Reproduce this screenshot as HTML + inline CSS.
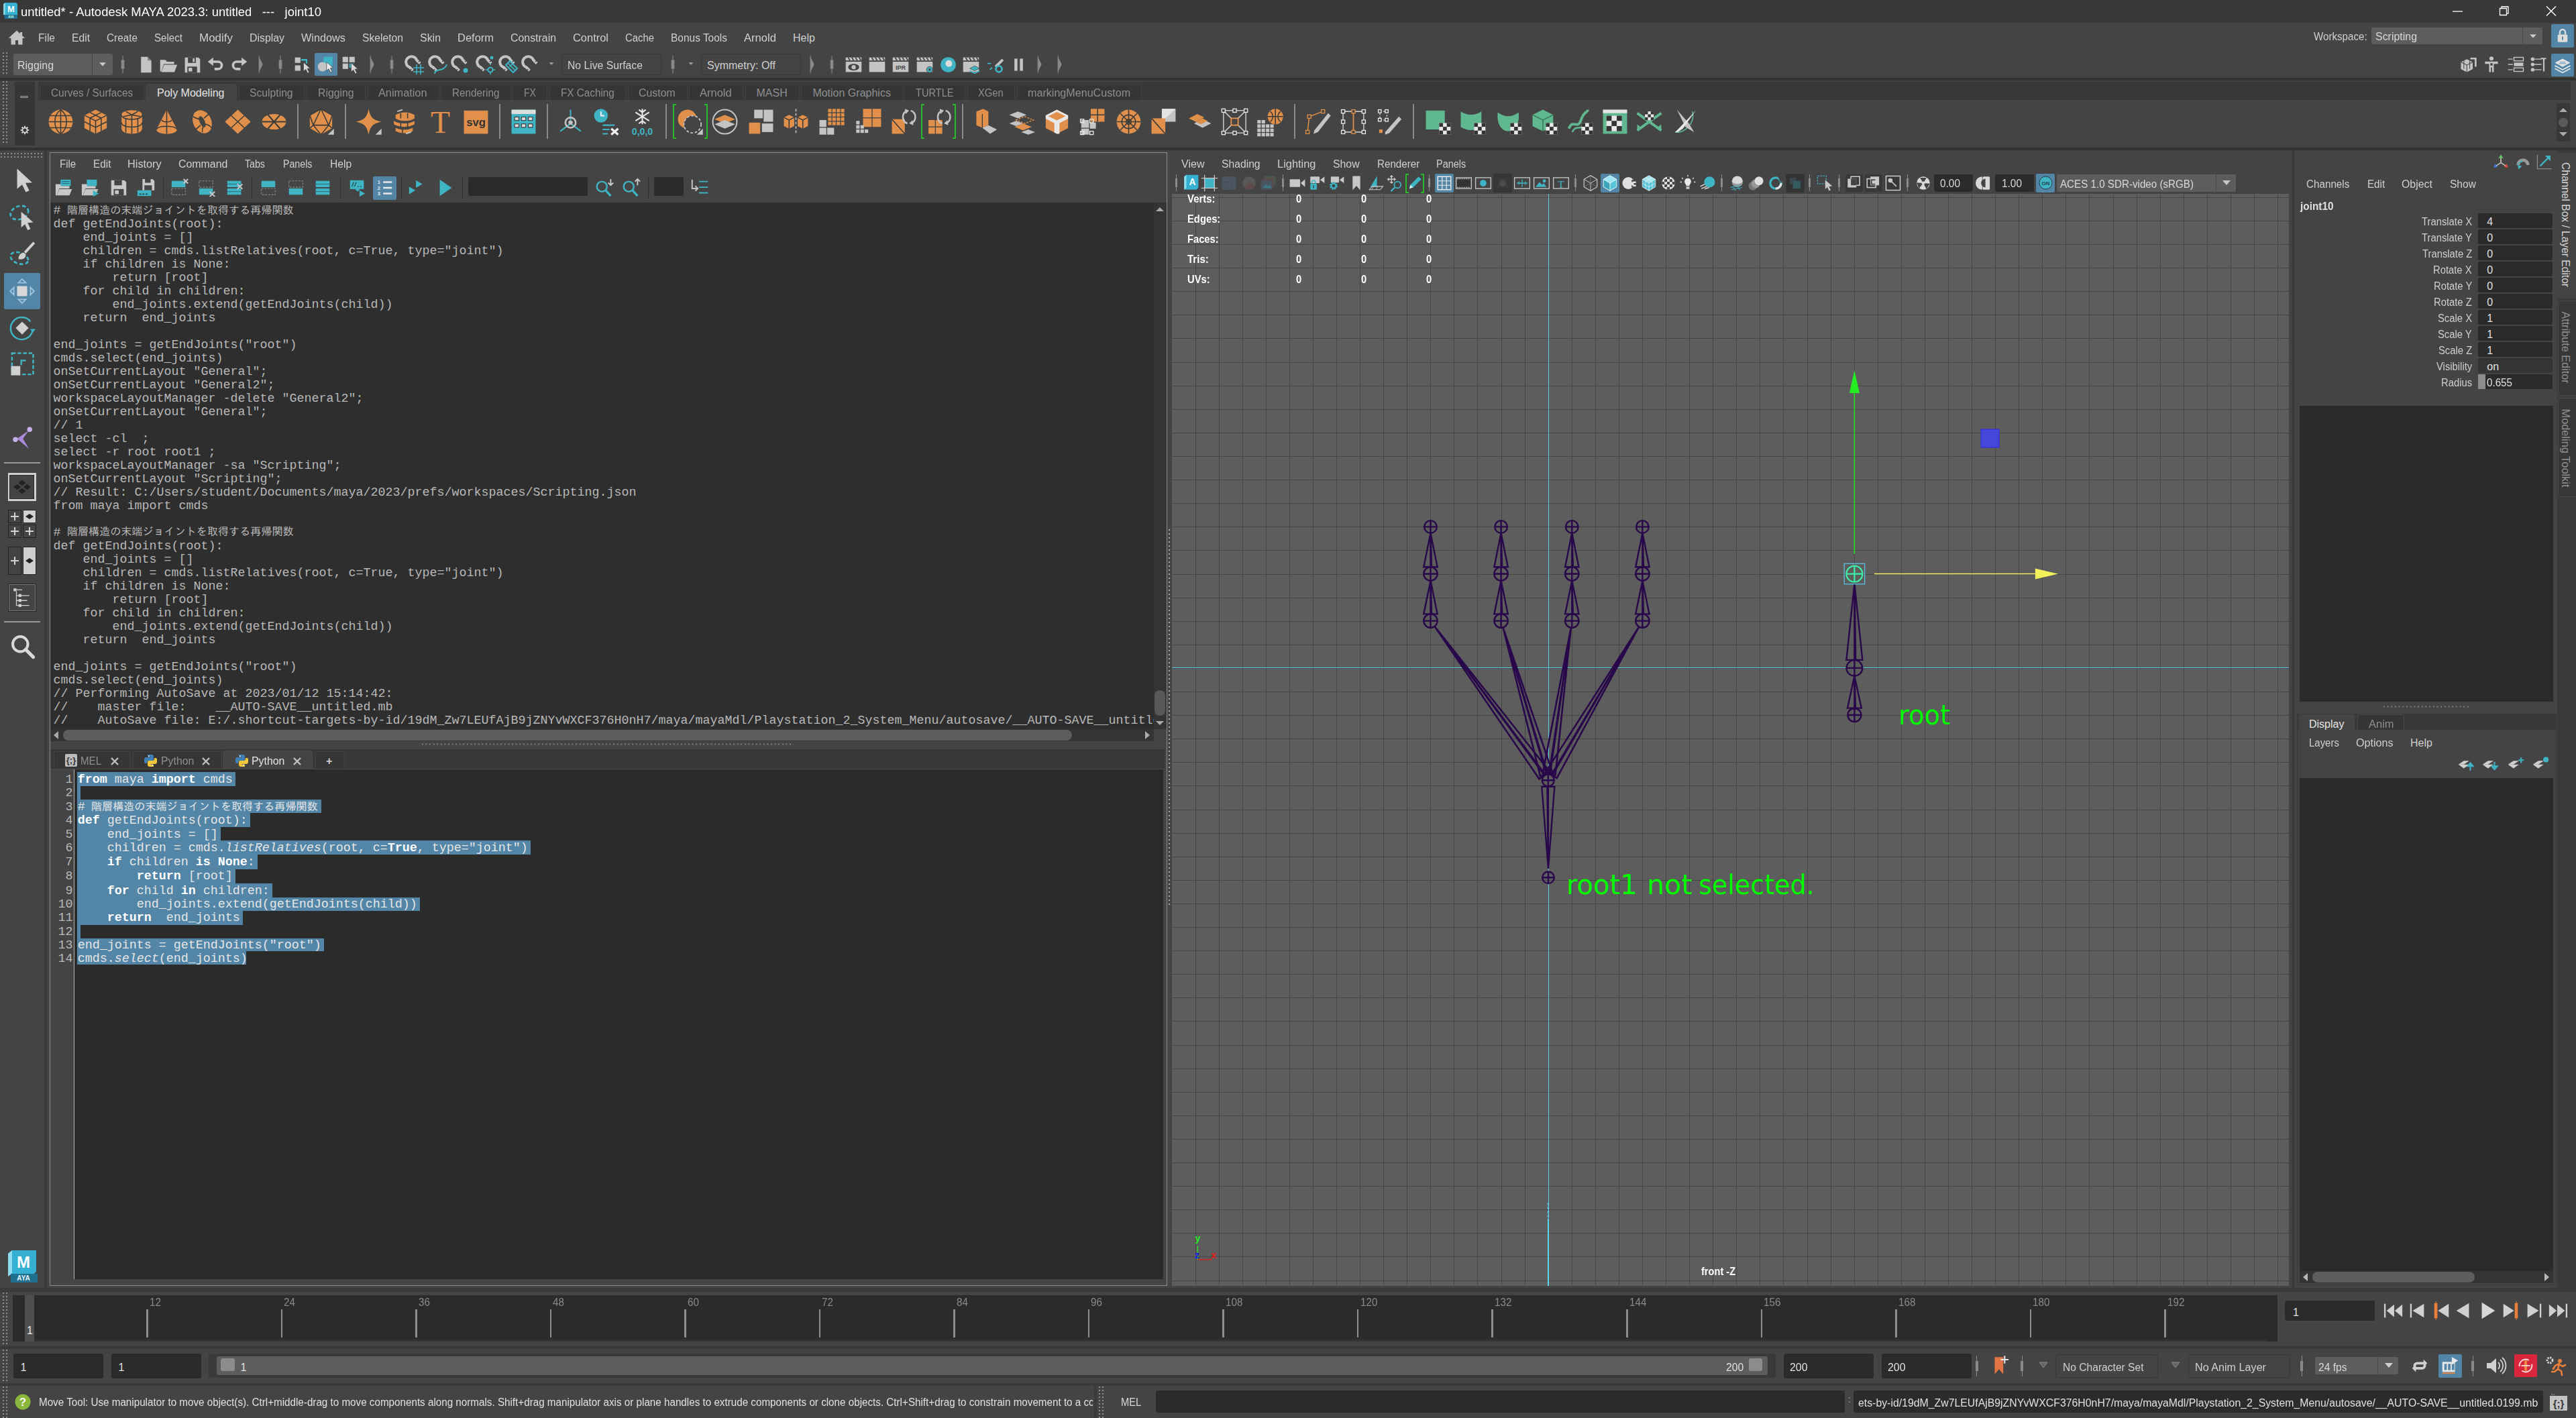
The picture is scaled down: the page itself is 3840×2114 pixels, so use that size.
<!DOCTYPE html>
<html><head><meta charset="utf-8"><title>untitled* - Autodesk MAYA 2023.3: untitled --- joint10</title>
<style>
html,body{margin:0;padding:0;background:#444;}
body{width:3840px;height:2114px;overflow:hidden;position:relative;}
#r{position:absolute;left:0;top:0;width:3840px;height:2114px;overflow:hidden;background:#444;}
#r>*{position:absolute;}
#r>span{white-space:pre;transform-origin:0 50%;display:block;}
.s{font-family:"Liberation Sans","Noto Sans CJK JP",sans-serif;}
.m{font-family:"Liberation Mono","Noto Sans CJK JP",monospace;}
.d{font-family:"DejaVu Sans","Liberation Sans",sans-serif;}
.j{font-family:"IPAGothic","Noto Sans CJK JP",sans-serif;}
.c>*{position:absolute;}
.c>span,#r>span{white-space:pre;transform-origin:0 50%;display:block;}
svg{overflow:visible;}
b{color:#fff;}
</style></head><body><div id="r">
<div style="left:0px;top:0px;width:3840px;height:34px;background:#383838;"></div>
<svg style="left:4px;top:3px" width="23" height="26" viewBox="0 0 23 26"><path d="M1 3l3-2h16l2 2v16H1z" fill="#35b0d0"/><path d="M1 3l3-2v18H1z" fill="#7fd4e8"/><path d="M2 19h20v6H3z" fill="#1f6f8f"/><text x="12.500" y="15" font-size="13" font-weight="700" text-anchor="middle" fill="#fff" font-family="Liberation Sans,sans-serif">M</text><text x="12.500" y="24" font-size="4.500" font-weight="700" text-anchor="middle" fill="#cfe" font-family="Liberation Sans,sans-serif">AYA</text></svg>
<span class="s" style="left:31px;top:6.95px;font-size:18px;line-height:23px;color:#fff;transform:scaleX(1.0261);">untitled* - Autodesk MAYA 2023.3: untitled   ---   joint10</span>
<svg style="left:3640px;top:0" width="200" height="34" viewBox="0 0 200 34"><path d="M16 17h15" stroke="#fff" stroke-width="1.300"/><path d="M86.500 12.500h10v10h-10z M89 12.500v-2.500h10v10h-2.500" stroke="#fff" stroke-width="1.300" fill="none"/><path d="M156 9.500l14 14M170 9.500l-14 14" stroke="#fff" stroke-width="1.400"/></svg>
<svg style="left:11.5px;top:43px;" width="26" height="26" viewBox="0 0 32 32"><path d="M16 3L1 17h4.500v12h8v-8h5v8h8V17H31L26 12.500V6h-4v3z" fill="#c4c4c4"/></svg>
<span class="s" style="left:57px;top:46.35px;font-size:16px;line-height:21px;color:#cfcfcf;transform:scaleX(0.9696);">File</span>
<span class="s" style="left:107px;top:46.35px;font-size:16px;line-height:21px;color:#cfcfcf;transform:scaleX(0.9793);">Edit</span>
<span class="s" style="left:159px;top:46.35px;font-size:16px;line-height:21px;color:#cfcfcf;transform:scaleX(0.9578);">Create</span>
<span class="s" style="left:230px;top:46.35px;font-size:16px;line-height:21px;color:#cfcfcf;transform:scaleX(0.9445);">Select</span>
<span class="s" style="left:297px;top:46.35px;font-size:16px;line-height:21px;color:#cfcfcf;transform:scaleX(1.0610);">Modify</span>
<span class="s" style="left:372px;top:46.35px;font-size:16px;line-height:21px;color:#cfcfcf;transform:scaleX(0.9912);">Display</span>
<span class="s" style="left:449px;top:46.35px;font-size:16px;line-height:21px;color:#cfcfcf;transform:scaleX(1.0168);">Windows</span>
<span class="s" style="left:540px;top:46.35px;font-size:16px;line-height:21px;color:#cfcfcf;transform:scaleX(0.9796);">Skeleton</span>
<span class="s" style="left:626px;top:46.35px;font-size:16px;line-height:21px;color:#cfcfcf;transform:scaleX(0.9959);">Skin</span>
<span class="s" style="left:682px;top:46.35px;font-size:16px;line-height:21px;color:#cfcfcf;transform:scaleX(1.0295);">Deform</span>
<span class="s" style="left:761px;top:46.35px;font-size:16px;line-height:21px;color:#cfcfcf;transform:scaleX(0.9930);">Constrain</span>
<span class="s" style="left:854px;top:46.35px;font-size:16px;line-height:21px;color:#cfcfcf;transform:scaleX(1.0275);">Control</span>
<span class="s" style="left:932px;top:46.35px;font-size:16px;line-height:21px;color:#cfcfcf;transform:scaleX(0.9297);">Cache</span>
<span class="s" style="left:1000px;top:46.35px;font-size:16px;line-height:21px;color:#cfcfcf;transform:scaleX(0.9669);">Bonus Tools</span>
<span class="s" style="left:1109px;top:46.35px;font-size:16px;line-height:21px;color:#cfcfcf;transform:scaleX(1.0378);">Arnold</span>
<span class="s" style="left:1182px;top:46.35px;font-size:16px;line-height:21px;color:#cfcfcf;">Help</span>
<span class="s" style="left:3449.4px;top:44.35px;font-size:16px;line-height:21px;color:#cfcfcf;transform:scaleX(0.9456);">Workspace:</span>
<div style="left:3535px;top:40.7px;width:255px;height:25px;background:#5d5d5d;border-radius:2px;"></div>
<div style="left:3759.5px;top:40.7px;width:1px;height:25px;background:#4a4a4a;"></div>
<span class="s" style="left:3541px;top:44.35px;font-size:16px;line-height:21px;color:#d8d8d8;transform:scaleX(0.9959);">Scripting</span>
<svg style="left:3764.5px;top:42.5px;" width="22" height="22" viewBox="0 0 32 32"><path d="M9 12h14l-7 8z" fill="#c8c8c8"/></svg>
<div style="left:3803px;top:36px;width:34px;height:34.5px;background:#5285a6;border-radius:2px;"></div>
<svg style="left:3807px;top:40px;" width="26" height="26" viewBox="0 0 32 32"><rect x="7" y="14" width="18" height="14" rx="1.500" fill="#ddd"/><path d="M11 14v-4a5 5 0 0 1 10 0v4" stroke="#ddd" stroke-width="3" fill="none"/><rect x="15" y="18" width="2" height="6" fill="#3a6a8c"/></svg>
<div style="left:20px;top:80.4px;width:148px;height:31.3px;background:#5d5d5d;border-radius:3px;"></div>
<div style="left:137px;top:80.4px;width:1px;height:31.3px;background:#4a4a4a;"></div>
<span class="s" style="left:25.6px;top:86.85px;font-size:16px;line-height:21px;color:#d8d8d8;transform:scaleX(0.9952);">Rigging</span>
<svg style="left:142px;top:84.5px;" width="22" height="22" viewBox="0 0 32 32"><path d="M9 12h14l-7 8z" fill="#c8c8c8"/></svg>
<div style="left:4px;top:78px;width:7px;height:32px;background-image:linear-gradient(90deg,#8e8e8e 2px,transparent 2px);background-size:5px 100%;-webkit-mask-image:linear-gradient(#000 2px,transparent 2px);-webkit-mask-size:100% 5px;mask-image:linear-gradient(#000 2px,transparent 2px);mask-size:100% 5px;"></div>
<svg style="left:168px;top:81px;" width="30" height="30" viewBox="0 0 32 32"><path d="M16 2v28" stroke="#8a8a8a" stroke-width="1.200"/><rect x="13.500" y="9" width="5" height="14" fill="#8a8a8a"/></svg>
<svg style="left:202.5px;top:81.5px;" width="29" height="29" viewBox="0 0 32 32"><path d="M8 3h11l6 6v20H8z" fill="#c4c4c4"/><path d="M19 3v6h6z" fill="#444" opacity=".55"/></svg>
<svg style="left:235.5px;top:81.5px;" width="29" height="29" viewBox="0 0 32 32"><path d="M3 8h9l2 3h12v4H9L5 27H3z" fill="#c4c4c4"/><path d="M9.500 16H31l-4.500 12H5z" fill="#c4c4c4"/></svg>
<svg style="left:271.5px;top:81.5px;" width="29" height="29" viewBox="0 0 32 32"><path d="M4 4h22l3 3v22H4z" fill="#c4c4c4"/><rect x="9" y="4" width="13" height="9" fill="#444"/><rect x="8" y="19" width="16" height="10" fill="#444"/><rect x="10" y="21" width="6" height="6" fill="#c4c4c4"/><rect x="17" y="5.500" width="3" height="6" fill="#c4c4c4"/></svg>
<svg style="left:306.5px;top:81.5px;" width="29" height="29" viewBox="0 0 32 32"><path d="M3 11l9-7v5h8a8 8 0 0 1 0 16h-6v-4h6a4 4 0 0 0 0-8h-8v5z" fill="#c4c4c4"/></svg>
<svg style="left:341.5px;top:81.5px;" width="29" height="29" viewBox="0 0 32 32"><g transform="translate(32,0) scale(-1,1)"><path d="M3 11l9-7v5h8a8 8 0 0 1 0 16h-6v-4h6a4 4 0 0 0 0-8h-8v5z" fill="#c4c4c4"/></g></svg>
<svg style="left:372.6px;top:81px;" width="30" height="30" viewBox="0 0 32 32"><path d="M14 4l6 12-6 12z" fill="#8a8a8a"/><path d="M14 2v28" stroke="#8a8a8a" stroke-width="1"/></svg>
<svg style="left:403px;top:81px;" width="30" height="30" viewBox="0 0 32 32"><path d="M16 2v28" stroke="#8a8a8a" stroke-width="1.200"/><rect x="13.500" y="9" width="5" height="14" fill="#8a8a8a"/></svg>
<svg style="left:436.5px;top:81.5px;" width="29" height="29" viewBox="0 0 32 32"><rect x="3" y="4" width="9" height="9" fill="#c4c4c4"/><rect x="3" y="17" width="9" height="9" fill="#c4c4c4"/><path d="M13 8h9v6" stroke="#3eb4c4" stroke-width="2.500" fill="none"/><path transform="translate(17,12) scale(1.05)" d="M0 0l0 14 3.500-3 3 6 2.500-1.200-3-6 4.500-.3z" fill="#d8d8d8" stroke="#444" stroke-width=".8"/></svg>
<svg style="left:507.5px;top:81.5px;" width="29" height="29" viewBox="0 0 32 32"><rect x="3" y="3" width="9" height="9" fill="#c4c4c4"/><rect x="14" y="3" width="9" height="9" fill="#c4c4c4"/><rect x="3" y="14" width="9" height="9" fill="#c4c4c4"/><rect x="14" y="14" width="7" height="7" fill="#3eb4c4"/><path transform="translate(17,13) scale(1.05)" d="M0 0l0 14 3.500-3 3 6 2.500-1.200-3-6 4.500-.3z" fill="#d8d8d8" stroke="#444" stroke-width=".8"/></svg>
<svg style="left:538.5px;top:81px;" width="30" height="30" viewBox="0 0 32 32"><path d="M14 4l6 12-6 12z" fill="#8a8a8a"/><path d="M14 2v28" stroke="#8a8a8a" stroke-width="1"/></svg>
<svg style="left:569px;top:81px;" width="30" height="30" viewBox="0 0 32 32"><path d="M16 2v28" stroke="#8a8a8a" stroke-width="1.200"/><rect x="13.500" y="9" width="5" height="14" fill="#8a8a8a"/></svg>
<svg style="left:601px;top:80px;" width="32" height="32" viewBox="0 0 32 32"><path d="M14.500 25.200L9.300 20A8.200 8.200 0 1 1 20 9.300L25.200 14.500" stroke="#c4c4c4" stroke-width="4" fill="none"/><path d="M12.300 23l-3.400 3.400M23 12.300l3.400-3.400" stroke="#444" stroke-width="1.300"/><path d="M15 21h16M15 27h16M20 16v15M26 16v15" stroke="#3eb4c4" stroke-width="1.600"/></svg>
<svg style="left:636px;top:80px;" width="32" height="32" viewBox="0 0 32 32"><path d="M14.500 25.200L9.300 20A8.200 8.200 0 1 1 20 9.300L25.200 14.500" stroke="#c4c4c4" stroke-width="4" fill="none"/><path d="M12.300 23l-3.400 3.400M23 12.300l3.400-3.400" stroke="#444" stroke-width="1.300"/><path d="M12 30c0-9 14-2 18-14" stroke="#3eb4c4" stroke-width="2" fill="none"/></svg>
<svg style="left:670px;top:80px;" width="32" height="32" viewBox="0 0 32 32"><path d="M14.500 25.200L9.300 20A8.200 8.200 0 1 1 20 9.300L25.200 14.500" stroke="#c4c4c4" stroke-width="4" fill="none"/><path d="M12.300 23l-3.400 3.400M23 12.300l3.400-3.400" stroke="#444" stroke-width="1.300"/><circle cx="24" cy="25" r="3.500" fill="#3eb4c4"/></svg>
<svg style="left:706.5px;top:80px;" width="32" height="32" viewBox="0 0 32 32"><path d="M14.500 25.200L9.300 20A8.200 8.200 0 1 1 20 9.300L25.200 14.500" stroke="#c4c4c4" stroke-width="4" fill="none"/><path d="M12.300 23l-3.400 3.400M23 12.300l3.400-3.400" stroke="#444" stroke-width="1.300"/><circle cx="24" cy="24" r="3.500" fill="none" stroke="#3eb4c4" stroke-width="2"/><circle cx="26" cy="6" r="2.500" fill="#3eb4c4"/><path d="M24 17v-3M24 31v-3M17 24h3M28 24h3" stroke="#3eb4c4" stroke-width="1.500"/></svg>
<svg style="left:741px;top:80px;" width="32" height="32" viewBox="0 0 32 32"><path d="M14.500 25.200L9.300 20A8.200 8.200 0 1 1 20 9.300L25.200 14.500" stroke="#c4c4c4" stroke-width="4" fill="none"/><path d="M12.300 23l-3.400 3.400M23 12.300l3.400-3.400" stroke="#444" stroke-width="1.300"/><path d="M13 17l6-6 11 11-6 6z" fill="#444" stroke="#3eb4c4" stroke-width="2"/><path d="M16 14l11 11M18.500 19.500l5-5" stroke="#3eb4c4" stroke-width="1.600"/></svg>
<svg style="left:775px;top:80px;" width="32" height="32" viewBox="0 0 32 32"><path d="M14.500 25.200L9.300 20A8.200 8.200 0 1 1 20 9.300L25.200 14.500" stroke="#c4c4c4" stroke-width="4" fill="none"/><path d="M12.300 23l-3.400 3.400M23 12.300l3.400-3.400" stroke="#444" stroke-width="1.300"/></svg>
<svg style="left:988px;top:81px;" width="30" height="30" viewBox="0 0 32 32"><path d="M16 2v28" stroke="#8a8a8a" stroke-width="1.200"/><rect x="13.500" y="9" width="5" height="14" fill="#8a8a8a"/></svg>
<svg style="left:1195px;top:81px;" width="30" height="30" viewBox="0 0 32 32"><path d="M14 4l6 12-6 12z" fill="#8a8a8a"/><path d="M14 2v28" stroke="#8a8a8a" stroke-width="1"/></svg>
<svg style="left:1225px;top:81px;" width="30" height="30" viewBox="0 0 32 32"><path d="M16 2v28" stroke="#8a8a8a" stroke-width="1.200"/><rect x="13.500" y="9" width="5" height="14" fill="#8a8a8a"/></svg>
<svg style="left:1257.5px;top:81.5px;" width="29" height="29" viewBox="0 0 32 32"><rect x="3" y="11" width="26" height="17" fill="#c4c4c4"/><path d="M3 4h26v5H3z" fill="#c4c4c4"/><path d="M7 4l3 5M13 4l3 5M19 4l3 5M25 4l3 5" stroke="#444" stroke-width="2"/><ellipse cx="16" cy="20" rx="9" ry="5.500" fill="#444"/><circle cx="16" cy="20" r="3.500" fill="#c4c4c4"/></svg>
<svg style="left:1292.5px;top:81.5px;" width="29" height="29" viewBox="0 0 32 32"><rect x="3" y="11" width="26" height="17" fill="#c4c4c4"/><path d="M3 4h26v5H3z" fill="#c4c4c4"/><path d="M7 4l3 5M13 4l3 5M19 4l3 5M25 4l3 5" stroke="#444" stroke-width="2"/></svg>
<svg style="left:1327.5px;top:81.5px;" width="29" height="29" viewBox="0 0 32 32"><rect x="3" y="11" width="26" height="17" fill="#c4c4c4"/><path d="M3 4h26v5H3z" fill="#c4c4c4"/><path d="M7 4l3 5M13 4l3 5M19 4l3 5M25 4l3 5" stroke="#444" stroke-width="2"/><text x="16" y="24.500" font-size="10" font-weight="700" text-anchor="middle" fill="#444" font-family="Liberation Sans,sans-serif">IPR</text></svg>
<svg style="left:1363.5px;top:81.5px;" width="29" height="29" viewBox="0 0 32 32"><rect x="3" y="11" width="26" height="17" fill="#c4c4c4"/><path d="M3 4h26v5H3z" fill="#c4c4c4"/><path d="M7 4l3 5M13 4l3 5M19 4l3 5M25 4l3 5" stroke="#444" stroke-width="2"/><circle cx="24" cy="24" r="5" fill="#3eb4c4" stroke="#444" stroke-width="1"/><circle cx="24" cy="24" r="2" fill="#444"/></svg>
<svg style="left:1398.5px;top:81.5px;" width="29" height="29" viewBox="0 0 32 32"><circle cx="16" cy="16" r="12.500" fill="#3eb4c4"/><circle cx="17" cy="14" r="5.500" fill="#ddd"/></svg>
<svg style="left:1433px;top:81.5px;" width="29" height="29" viewBox="0 0 32 32"><rect x="3" y="11" width="26" height="17" fill="#c4c4c4"/><path d="M3 4h26v5H3z" fill="#c4c4c4"/><path d="M7 4l3 5M13 4l3 5M19 4l3 5M25 4l3 5" stroke="#444" stroke-width="2"/><path d="M14 22l8-4 8 4-8 4z" fill="#3eb4c4" stroke="#444" stroke-width=".8"/><path d="M14 26l8 4 8-4" stroke="#3eb4c4" stroke-width="2" fill="none"/></svg>
<svg style="left:1469.5px;top:81.5px;" width="29" height="29" viewBox="0 0 32 32"><path d="M14 18l12-12 3 3-12 12z" fill="#c4c4c4"/><circle cx="21" cy="23" r="5" fill="none" stroke="#3eb4c4" stroke-width="3"/><path d="M2 14h6M6 24l4-3" stroke="#3eb4c4" stroke-width="2"/></svg>
<svg style="left:1503.5px;top:81.5px;" width="29" height="29" viewBox="0 0 32 32"><rect x="9" y="6" width="5" height="20" fill="#c4c4c4"/><rect x="18" y="6" width="5" height="20" fill="#c4c4c4"/></svg>
<svg style="left:1534px;top:81px;" width="30" height="30" viewBox="0 0 32 32"><path d="M14 4l6 12-6 12z" fill="#8a8a8a"/><path d="M14 2v28" stroke="#8a8a8a" stroke-width="1"/></svg>
<svg style="left:1563.6px;top:81px;" width="30" height="30" viewBox="0 0 32 32"><path d="M14 4l6 12-6 12z" fill="#8a8a8a"/><path d="M14 2v28" stroke="#8a8a8a" stroke-width="1"/></svg>
<div style="left:469px;top:79px;width:34px;height:34px;background:#5285a6;border-radius:2px;"></div>
<svg style="left:472px;top:82px;" width="28" height="28" viewBox="0 0 32 32"><rect x="12" y="3" width="15" height="15" fill="#3eb4c4"/><circle cx="10" cy="20" r="8" fill="#c4c4c4"/><path transform="translate(17,12) scale(1.05)" d="M0 0l0 14 3.500-3 3 6 2.500-1.200-3-6 4.500-.3z" fill="#eee" stroke="#444" stroke-width=".8"/></svg>
<svg style="left:814px;top:87px;" width="16" height="16" viewBox="0 0 32 32"><path d="M9 12h14l-7 8z" fill="#9a9a9a"/></svg>
<svg style="left:1021.6px;top:87px;" width="16" height="16" viewBox="0 0 32 32"><path d="M9 12h14l-7 8z" fill="#9a9a9a"/></svg>
<div style="left:837px;top:80px;width:149px;height:32px;background:#444;border-radius:3px;border:1px solid #3a3a3a;box-sizing:border-box;"></div>
<span class="s" style="left:846px;top:87.35px;font-size:16px;line-height:21px;color:#d0d0d0;transform:scaleX(0.9838);">No Live Surface</span>
<div style="left:1044.5px;top:80px;width:149px;height:32px;background:#444;border-radius:3px;border:1px solid #3a3a3a;box-sizing:border-box;"></div>
<span class="s" style="left:1054px;top:87.35px;font-size:16px;line-height:21px;color:#d0d0d0;">Symmetry: Off</span>
<svg style="left:3665px;top:82px;" width="28" height="28" viewBox="0 0 32 32"><path d="M4 12l10-5 10 5v12l-10 5-10-5z" fill="#c4c4c4"/><path d="M4 12l10 5 10-5M14 17v12M9 9.500v14M19 9.500v14" stroke="#444" stroke-width="1.200" fill="none"/><path d="M20 6h9v14" stroke="#c4c4c4" stroke-width="3" fill="none"/></svg>
<svg style="left:3700px;top:82px;" width="28" height="28" viewBox="0 0 32 32"><circle cx="16" cy="6" r="3.500" fill="#c4c4c4"/><path d="M5 11h22v4h-7v14h-3v-8h-2v8h-3V15H5z" fill="#c4c4c4"/><rect x="14" y="14" width="4" height="4" fill="#444"/></svg>
<svg style="left:3736.5px;top:82px;" width="28" height="28" viewBox="0 0 32 32"><g stroke="#c4c4c4" stroke-width="1.600" fill="none"><path d="M2 7h8M2 16h8M2 25h8"/><rect x="12" y="4" width="16" height="6"/><rect x="12" y="22" width="16" height="6"/></g><rect x="12" y="13" width="16" height="6" fill="#c4c4c4"/></svg>
<svg style="left:3771px;top:82px;" width="28" height="28" viewBox="0 0 32 32"><g fill="#c4c4c4"><circle cx="5" cy="7" r="3"/><circle cx="5" cy="16" r="3"/><circle cx="5" cy="25" r="3"/></g><g stroke="#c4c4c4" stroke-width="1.600"><path d="M8 7h12M8 16h12M8 25h12"/></g><path d="M24 6v22M19 6h9" stroke="#c4c4c4" stroke-width="2.500"/></svg>
<div style="left:3803px;top:79.5px;width:34px;height:34.3px;background:#5285a6;border-radius:2px;"></div>
<svg style="left:3806px;top:82.5px;" width="28" height="28" viewBox="0 0 32 32"><path d="M3 12l13-7 13 7-13 7z" fill="#e6e6e6"/><path d="M3 17l13 7 13-7M3 22l13 7 13-7" stroke="#e6e6e6" stroke-width="2" fill="none"/><path d="M11 11h10M10 13.500h12" stroke="#5285a6" stroke-width="1"/></svg>
<div style="left:0px;top:116px;width:3840px;height:3.6px;background:#323232;"></div>
<div style="left:4px;top:121px;width:7px;height:92px;background-image:linear-gradient(90deg,#8e8e8e 2px,transparent 2px);background-size:5px 100%;-webkit-mask-image:linear-gradient(#000 2px,transparent 2px);-webkit-mask-size:100% 5px;mask-image:linear-gradient(#000 2px,transparent 2px);mask-size:100% 5px;"></div>
<div style="left:22px;top:122px;width:30px;height:94.5px;background:#363636;"></div>
<div style="left:30px;top:142.6px;width:12px;height:1.4px;background:#aaa;"></div>
<div style="left:30px;top:145px;width:12px;height:1.4px;background:#aaa;"></div>
<svg style="left:30px;top:186.500px" width="14" height="14" viewBox="0 0 18 18"><circle cx="9" cy="9" r="4.500" fill="none" stroke="#d0d0d0" stroke-width="2.400"/><g stroke="#d0d0d0" stroke-width="2.600"><path d="M9 1v3M9 14v3M1 9h3M14 9h3M3.300 3.300l2.100 2.100M12.600 12.600l2.100 2.100M3.300 14.700l2.100-2.100M12.600 5.400l2.100-2.100"/></g></svg>
<div style="left:57px;top:122px;width:3775px;height:27px;background:#383838;"></div>
<div style="left:58.6px;top:125.5px;width:156.1px;height:23.5px;background:#353535;border-radius:3px 3px 0 0;border:1px solid #404040;border-bottom:none;box-sizing:border-box;"></div>
<span class="s" style="left:75.5px;top:128.35px;font-size:16px;line-height:21px;color:#8f8f8f;transform:scaleX(0.9618);">Curves / Surfaces</span>
<div style="left:216.6px;top:124.5px;width:136.2px;height:25px;background:#444;border-radius:3px 3px 0 0;"></div>
<span class="s" style="left:234px;top:128.35px;font-size:16px;line-height:21px;color:#e4e4e4;">Poly Modeling</span>
<div style="left:355.8px;top:125.5px;width:98.2px;height:23.5px;background:#353535;border-radius:3px 3px 0 0;border:1px solid #404040;border-bottom:none;box-sizing:border-box;"></div>
<span class="s" style="left:371.7px;top:128.35px;font-size:16px;line-height:21px;color:#8f8f8f;transform:scaleX(0.9814);">Sculpting</span>
<div style="left:457px;top:125.5px;width:88px;height:23.5px;background:#353535;border-radius:3px 3px 0 0;border:1px solid #404040;border-bottom:none;box-sizing:border-box;"></div>
<span class="s" style="left:473.5px;top:128.35px;font-size:16px;line-height:21px;color:#8f8f8f;transform:scaleX(0.9860);">Rigging</span>
<div style="left:547.6px;top:125.5px;width:107.4px;height:23.5px;background:#353535;border-radius:3px 3px 0 0;border:1px solid #404040;border-bottom:none;box-sizing:border-box;"></div>
<span class="s" style="left:564px;top:128.35px;font-size:16px;line-height:21px;color:#8f8f8f;transform:scaleX(1.0190);">Animation</span>
<div style="left:657px;top:125.5px;width:104.7px;height:23.5px;background:#353535;border-radius:3px 3px 0 0;border:1px solid #404040;border-bottom:none;box-sizing:border-box;"></div>
<span class="s" style="left:673.8px;top:128.35px;font-size:16px;line-height:21px;color:#8f8f8f;transform:scaleX(0.9549);">Rendering</span>
<div style="left:764px;top:125.5px;width:52.4px;height:23.5px;background:#353535;border-radius:3px 3px 0 0;border:1px solid #404040;border-bottom:none;box-sizing:border-box;"></div>
<span class="s" style="left:781px;top:128.35px;font-size:16px;line-height:21px;color:#8f8f8f;transform:scaleX(0.8804);">FX</span>
<div style="left:819px;top:125.5px;width:114px;height:23.5px;background:#353535;border-radius:3px 3px 0 0;border:1px solid #404040;border-bottom:none;box-sizing:border-box;"></div>
<span class="s" style="left:836px;top:128.35px;font-size:16px;line-height:21px;color:#8f8f8f;transform:scaleX(0.9546);">FX Caching</span>
<div style="left:935.7px;top:125.5px;width:88.9px;height:23.5px;background:#353535;border-radius:3px 3px 0 0;border:1px solid #404040;border-bottom:none;box-sizing:border-box;"></div>
<span class="s" style="left:952px;top:128.35px;font-size:16px;line-height:21px;color:#8f8f8f;transform:scaleX(0.9923);">Custom</span>
<div style="left:1027px;top:125.5px;width:81px;height:23.5px;background:#353535;border-radius:3px 3px 0 0;border:1px solid #404040;border-bottom:none;box-sizing:border-box;"></div>
<span class="s" style="left:1043px;top:128.35px;font-size:16px;line-height:21px;color:#8f8f8f;transform:scaleX(1.0313);">Arnold</span>
<div style="left:1110.5px;top:125.5px;width:81px;height:23.5px;background:#353535;border-radius:3px 3px 0 0;border:1px solid #404040;border-bottom:none;box-sizing:border-box;"></div>
<span class="s" style="left:1127.5px;top:128.35px;font-size:16px;line-height:21px;color:#8f8f8f;">MASH</span>
<div style="left:1194px;top:125.5px;width:151.6px;height:23.5px;background:#353535;border-radius:3px 3px 0 0;border:1px solid #404040;border-bottom:none;box-sizing:border-box;"></div>
<span class="s" style="left:1211.4px;top:128.35px;font-size:16px;line-height:21px;color:#8f8f8f;">Motion Graphics</span>
<div style="left:1347.6px;top:125.5px;width:91.4px;height:23.5px;background:#353535;border-radius:3px 3px 0 0;border:1px solid #404040;border-bottom:none;box-sizing:border-box;"></div>
<span class="s" style="left:1364.5px;top:128.35px;font-size:16px;line-height:21px;color:#8f8f8f;transform:scaleX(0.9122);">TURTLE</span>
<div style="left:1441.5px;top:125.5px;width:71px;height:23.5px;background:#353535;border-radius:3px 3px 0 0;border:1px solid #404040;border-bottom:none;box-sizing:border-box;"></div>
<span class="s" style="left:1458px;top:128.35px;font-size:16px;line-height:21px;color:#8f8f8f;transform:scaleX(0.9190);">XGen</span>
<div style="left:1515.5px;top:125.5px;width:186.9px;height:23.5px;background:#353535;border-radius:3px 3px 0 0;border:1px solid #404040;border-bottom:none;box-sizing:border-box;"></div>
<span class="s" style="left:1532.4px;top:128.35px;font-size:16px;line-height:21px;color:#8f8f8f;transform:scaleX(1.0068);">markingMenuCustom</span>
<div style="left:3811px;top:154px;width:20px;height:57px;background:#383838;"></div>
<svg style="left:3811px;top:154px" width="20" height="57" viewBox="0 0 20 57"><path d="M4 13l6-6 6 6z" fill="#aaa"/><circle cx="10" cy="28.500" r="7" fill="#5a5a5a"/><path d="M4 43l6 6 6-6z" fill="#aaa"/></svg>
<div style="left:0px;top:219.5px;width:3840px;height:4.5px;background:#323232;"></div>
<svg style="left:69.5px;top:160.5px;" width="41" height="41" viewBox="0 0 32 32"><circle cx="16" cy="16" r="14" fill="#e0904a"/><path d="M2 16h28M4 9h24M4 23h24M16 2v28M16 2c-9 6-9 22 0 28M16 2c9 6 9 22 0 28" stroke="#3a3a3a" stroke-width="1.2" fill="none"/></svg>
<svg style="left:121.5px;top:160.5px;" width="41" height="41" viewBox="0 0 32 32"><path d="M16 2l13 6.500v15L16 30 3 23.500v-15z" fill="#e0904a"/><path d="M3 8.500l13 6.500 13-6.500M16 15v15M9.500 5.200l13 6.500v15M22.500 5.200l-13 6.500v15M3 16l13 6.500 13-6.500" stroke="#3a3a3a" stroke-width="1.2" fill="none"/></svg>
<svg style="left:175.5px;top:160.5px;" width="41" height="41" viewBox="0 0 32 32"><path d="M4 8v16c0 8 24 8 24 0V8z" fill="#e0904a"/><ellipse cx="16" cy="8" rx="12" ry="5.500" fill="#e0904a"/><path d="M4 8c0 7 24 7 24 0M4 17c0 7 24 7 24 0M16 13.500v16.500M9 12.500v16M23 12.500v16M16 8l-7-4M16 8l7-4M16 8v5.500M16 8l-10 2M16 8l10 2" stroke="#3a3a3a" stroke-width="1.2" fill="none"/></svg>
<svg style="left:228px;top:160.5px;" width="41" height="41" viewBox="0 0 32 32"><path d="M16 2L4 25c0 7 24 7 24 0z" fill="#e0904a"/><path d="M16 2v28M10 14c2 3 10 3 12 0M4 25c2 -5 22 -5 24 0" stroke="#3a3a3a" stroke-width="1.2" fill="none"/></svg>
<svg style="left:281.1px;top:160.5px;" width="41" height="41" viewBox="0 0 32 32"><ellipse cx="16" cy="16" rx="10.500" ry="14" fill="#e0904a" transform="rotate(-25 16 16)"/><ellipse cx="16" cy="16" rx="3" ry="7" fill="#444" transform="rotate(-25 16 16)"/><path d="M5 10c4 2 6 3 8 3M19 19c3 0 6 2 8 4M8 25c3-2 5-4 6-5M18 12c2-2 4-4 6-5M16 28c0-3 0-4 1-6" stroke="#3a3a3a" stroke-width="1.2" fill="none"/></svg>
<svg style="left:334.3px;top:160.5px;" width="41" height="41" viewBox="0 0 32 32"><path d="M16 2l15 14-15 14L1 16z" fill="#e0904a"/><path d="M8.500 9l15 14M23.500 9l-15 14" stroke="#3a3a3a" stroke-width="1.2" fill="none"/></svg>
<svg style="left:387.5px;top:160.5px;" width="41" height="41" viewBox="0 0 32 32"><ellipse cx="16" cy="16" rx="14" ry="9" fill="#e0904a"/><path d="M2 16h28M9 8l14 16M23 8L9 24" stroke="#3a3a3a" stroke-width="1.5" fill="none"/></svg>
<div style="left:442.7px;top:155px;width:2px;height:52px;background:#8a8a8a;"></div>
<svg style="left:458px;top:160.5px;" width="41" height="41" viewBox="0 0 32 32"><path d="M16 1l13 7.500v15L16 31 3 23.500v-15z" fill="#e0904a"/><path d="M16 1L7 20h18zM3 8.500l4 11.500M29 8.500l-4 11.500M7 20l9 11 9-11M3 23.500l4-3.500M29 23.500l-4-3.500M3 8.500l13-7.500 13 7.500" stroke="#3a3a3a" stroke-width="1.2" fill="none"/><path d="M31 24v7h-7z" fill="#c4c4c4"/></svg>
<div style="left:513.8px;top:155px;width:2px;height:52px;background:#8a8a8a;"></div>
<svg style="left:528.5px;top:160.5px;" width="41" height="41" viewBox="0 0 32 32"><path d="M16 1c2 10 5 13 15 15-10 2-13 5-15 15-2-10-5-13-15-15 10-2 13-5 15-15z" fill="#e0904a"/><path d="M31 24v7h-7z" fill="#c4c4c4"/></svg>
<svg style="left:582.2px;top:160.5px;" width="41" height="41" viewBox="0 0 32 32"><path d="M6 8c6-4 16-4 22 0v4c-6 4-16 4-22 0zM4 15c7 4 17 4 24 0v4c-7 4-17 4-24 0zM6 23c6 3 14 3 20 0v4c-6 3-14 3-20 0z" fill="#e0904a"/><path d="M12 6v6M20 6v6M12 17v5M20 17v5M14 25v4" stroke="#3a3a3a" stroke-width="1.2" fill="none"/><path d="M8 4l6-2M18 30l6-2" stroke="#c4c4c4" stroke-width="1.5" fill="none"/></svg>
<svg style="left:635.5px;top:160.5px;" width="41" height="41" viewBox="0 0 32 32"><text x="16" y="29" font-size="37" text-anchor="middle" fill="#e0904a" font-family="Liberation Serif,serif">T</text></svg>
<svg style="left:688.5px;top:160.5px;" width="41" height="41" viewBox="0 0 32 32"><rect x="2" y="3" width="28" height="27" fill="#e0904a"/><text x="16" y="21" font-size="13" font-weight="700" text-anchor="middle" fill="#333" font-family="Liberation Sans,sans-serif">svg</text></svg>
<div style="left:744px;top:155px;width:2px;height:52px;background:#8a8a8a;"></div>
<svg style="left:759.5px;top:160.5px;" width="41" height="41" viewBox="0 0 32 32"><rect x="2" y="2" width="28" height="28" rx="1" fill="#3eb4c4"/><rect x="2" y="2" width="28" height="5" fill="#ddd"/><g fill="#444"><rect x="5" y="10" width="6" height="5"/><rect x="13" y="10" width="6" height="5"/><rect x="21" y="10" width="6" height="5"/><rect x="5" y="18" width="6" height="5"/><rect x="13" y="18" width="6" height="5"/><rect x="21" y="18" width="6" height="5"/></g><g fill="#ddd"><rect x="6" y="11" width="4" height="3"/><rect x="14" y="11" width="4" height="3"/><rect x="22" y="11" width="4" height="3"/><rect x="6" y="19" width="4" height="3"/><rect x="14" y="19" width="4" height="3"/><rect x="22" y="19" width="4" height="3"/></g></svg>
<div style="left:815px;top:155px;width:2px;height:52px;background:#8a8a8a;"></div>
<svg style="left:830.2px;top:160.5px;" width="41" height="41" viewBox="0 0 32 32"><path d="M16 2v12M16 18L4 27M16 18l12 9" stroke="#3eb4c4" stroke-width="1.6" fill="none"/><circle cx="16" cy="17" r="6" fill="none" stroke="#c4c4c4" stroke-width="2"/><circle cx="16" cy="17" r="2.500" fill="#c4c4c4"/></svg>
<svg style="left:882.9px;top:160.5px;" width="41" height="41" viewBox="0 0 32 32"><circle cx="10" cy="9" r="8" fill="#3eb4c4"/><path d="M10 4v5h4" stroke="#eee" stroke-width="1.6" fill="none"/><path d="M12 20h14M12 25h8M12 30h6" stroke="#3eb4c4" stroke-width="1.6" fill="none"/><path d="M22 24l8 7M30 24l-8 7" stroke="#eee" stroke-width="2.6" fill="none"/></svg>
<svg style="left:937px;top:160.5px;" width="41" height="41" viewBox="0 0 32 32"><path d="M16 1v18M8 5l16 10M24 5L8 15M12 2l4 3 4-3M12 18l4-3 4 3" stroke="#e8e8e8" stroke-width="1.6" fill="none"/><text x="16" y="31" font-size="11" text-anchor="middle" fill="#3eb4c4" font-weight="700" font-family="Liberation Sans,sans-serif">0,0,0</text></svg>
<div style="left:991.8px;top:155px;width:2px;height:52px;background:#8a8a8a;"></div>
<svg style="left:1008.1px;top:160.5px;" width="41" height="41" viewBox="0 0 32 32"><circle cx="13" cy="13" r="11" fill="#e0904a"/><circle cx="19" cy="19" r="10" fill="#444" stroke="#c4c4c4" stroke-width="1.400" stroke-dasharray="3 2"/><path d="M31 24v7h-7z" fill="#c4c4c4"/></svg>
<svg style="left:1002.6px;top:155px" width="52" height="52" viewBox="0 0 52 52"><path d="M5 1H1v50h4M47 1h4v50h-4" stroke="#22dd22" stroke-width="1.500" fill="none"/></svg>
<svg style="left:1060.2px;top:160.5px;" width="41" height="41" viewBox="0 0 32 32"><circle cx="16" cy="16" r="14" fill="none" stroke="#c4c4c4" stroke-width="1.600"/><path d="M4 13l12-5 12 5-12 5z" fill="#e0904a"/><path d="M4 19l12-5 12 5-12 5z" fill="#c4c4c4"/></svg>
<svg style="left:1113.9px;top:160.5px;" width="41" height="41" viewBox="0 0 32 32"><rect x="8" y="2" width="10" height="10" fill="#c4c4c4"/><rect x="19" y="2" width="11" height="14" fill="#c4c4c4"/><rect x="17" y="18" width="13" height="10" fill="#c4c4c4"/><rect x="2" y="17" width="13" height="13" fill="#e0904a"/></svg>
<svg style="left:1165.5px;top:160.5px;" width="41" height="41" viewBox="0 0 32 32"><path d="M2 11l6-3 6 3v10l-6 3-6-3z" fill="#e0904a"/><path d="M18 11l6-3 6 3v10l-6 3-6-3z" fill="#e0904a"/><path d="M2 11l6 3 6-3M8 14v10M18 11l6 3 6-3M24 14v10" stroke="#3a3a3a" stroke-width="1.2" fill="none"/><path d="M16 1v30" stroke="#c4c4c4" stroke-width="1.2" fill="none" stroke-dasharray="3 2"/></svg>
<svg style="left:1218.5px;top:160.5px;" width="41" height="41" viewBox="0 0 32 32"><rect x="12" y="1" width="4" height="4" fill="#e0904a"/><rect x="12" y="6" width="4" height="4" fill="#e0904a"/><rect x="12" y="11" width="4" height="4" fill="#e0904a"/><rect x="12" y="16" width="4" height="4" fill="#e0904a"/><rect x="17" y="1" width="4" height="4" fill="#e0904a"/><rect x="17" y="6" width="4" height="4" fill="#e0904a"/><rect x="17" y="11" width="4" height="4" fill="#e0904a"/><rect x="17" y="16" width="4" height="4" fill="#e0904a"/><rect x="22" y="1" width="4" height="4" fill="#e0904a"/><rect x="22" y="6" width="4" height="4" fill="#e0904a"/><rect x="22" y="11" width="4" height="4" fill="#e0904a"/><rect x="22" y="16" width="4" height="4" fill="#e0904a"/><rect x="27" y="1" width="4" height="4" fill="#e0904a"/><rect x="27" y="6" width="4" height="4" fill="#e0904a"/><rect x="27" y="11" width="4" height="4" fill="#e0904a"/><rect x="27" y="16" width="4" height="4" fill="#e0904a"/><rect x="2" y="14" width="8" height="8" fill="#c4c4c4"/><rect x="2" y="23" width="8" height="8" fill="#c4c4c4"/><rect x="11" y="23" width="8" height="8" fill="#c4c4c4"/></svg>
<svg style="left:1274.5px;top:160.5px;" width="41" height="41" viewBox="0 0 32 32"><rect x="9" y="1" width="10" height="10" fill="#e0904a"/><rect x="20" y="1" width="10" height="10" fill="#e0904a"/><rect x="9" y="12" width="10" height="10" fill="#e0904a"/><rect x="20" y="12" width="10" height="10" fill="#e0904a"/><rect x="1" y="15" width="4" height="4" fill="#c4c4c4"/><rect x="1" y="20" width="4" height="4" fill="#c4c4c4"/><rect x="1" y="25" width="4" height="4" fill="#c4c4c4"/><rect x="6" y="20" width="4" height="4" fill="#c4c4c4"/><rect x="6" y="25" width="4" height="4" fill="#c4c4c4"/><rect x="11" y="25" width="4" height="4" fill="#c4c4c4"/></svg>
<svg style="left:1326.5px;top:160.5px;" width="41" height="41" viewBox="0 0 32 32"><path d="M2 13h15v17H2z" fill="#e0904a"/><path d="M2 13l15 17" stroke="#3a3a3a" stroke-width="1.2" fill="none"/><path d="M20 3a8 8 0 0 0 0 15M24 18a8 8 0 0 0 0-15" stroke="#c4c4c4" stroke-width="2" fill="none"/><path d="M17 1l5 2-4 4zM27 20l-5-2 4-4z" fill="#c4c4c4"/></svg>
<svg style="left:1378.5px;top:160.5px;" width="41" height="41" viewBox="0 0 32 32"><rect x="4" y="14" width="7.500" height="7.500" fill="#e0904a"/><rect x="12.500" y="14" width="7.500" height="7.500" fill="#e0904a"/><rect x="4" y="22.500" width="7.500" height="7.500" fill="#e0904a"/><rect x="12.500" y="22.500" width="7.500" height="7.500" fill="#e0904a"/><path d="M20 3a8 8 0 0 0 0 15M24 18a8 8 0 0 0 0-15" stroke="#c4c4c4" stroke-width="2" fill="none"/><path d="M17 1l5 2-4 4zM27 20l-5-2 4-4z" fill="#c4c4c4"/></svg>
<svg style="left:1373px;top:155px" width="52" height="52" viewBox="0 0 52 52"><path d="M5 1H1v50h4M47 1h4v50h-4" stroke="#22dd22" stroke-width="1.500" fill="none"/></svg>
<div style="left:1434px;top:155px;width:2px;height:52px;background:#8a8a8a;"></div>
<svg style="left:1448.5px;top:160.5px;" width="41" height="41" viewBox="0 0 32 32"><path d="M5 4l8-3 6 3v16l-7 3-7-3z" fill="#e0904a"/><path d="M12 23l7-3 10 5-8 5z" fill="#c4c4c4"/><path d="M12 23v-16" stroke="#3a3a3a" stroke-width="1"/></svg>
<svg style="left:1502px;top:160.5px;" width="41" height="41" viewBox="0 0 32 32"><path d="M2 8l10-4 10 4-10 4z" fill="#c4c4c4"/><path d="M10 14l10-4 10 4-10 4z" fill="none" stroke="#e0904a" stroke-width="1.200" stroke-dasharray="2 1.500"/><path d="M8 22l10-4 10 4-10 4z" fill="#e0904a"/><path d="M2 18l8-3 8 3-8 3z" fill="#c4c4c4"/><path d="M16 28l8-3 8 3-8 3z" fill="#c4c4c4"/></svg>
<svg style="left:1555.2px;top:160.5px;" width="41" height="41" viewBox="0 0 32 32"><path d="M16 2l13 6.500v15L16 30 3 23.500v-15z" fill="#e0904a"/><path d="M16 2l4 2v0l9 4.500v4l-10 5v12.500l-3 0-3-1.500V17.500L3 12.500v-4z" fill="#e8e8e8"/><path d="M16 4.500l10 5-10 5-10-5z" fill="#e0904a"/></svg>
<svg style="left:1607.5px;top:160.5px;" width="41" height="41" viewBox="0 0 32 32"><rect x="14" y="1" width="16" height="15" fill="#e0904a"/><rect x="3" y="14" width="9" height="9" fill="#c4c4c4"/><rect x="13" y="17" width="7" height="7" fill="#c4c4c4"/><rect x="3" y="24" width="9" height="7" fill="#c4c4c4"/><path d="M2 13h4v4h-4zM13 13h4v4h-4zM2 27h4v4h-4zM13 27h4v4h-4z" stroke="#eee" stroke-width="1" fill="none"/><path d="M14 8h16M22 1v15" stroke="#3a3a3a" stroke-width="1.2" fill="none"/></svg>
<svg style="left:1662px;top:160.5px;" width="41" height="41" viewBox="0 0 32 32"><circle cx="16" cy="16" r="14" fill="#e0904a"/><path d="M2 16h28M16 2v28M6 6l20 20M26 6L6 26" stroke="#3a3a3a" stroke-width="1.2" fill="none"/><circle cx="16" cy="16" r="8" fill="none" stroke="#3a3a3a" stroke-width="1.200"/><circle cx="16" cy="16" r="3" fill="none" stroke="#3a3a3a" stroke-width="1.200"/></svg>
<svg style="left:1714.2px;top:160.5px;" width="41" height="41" viewBox="0 0 32 32"><path d="M14 1h16v15H14z" fill="#c4c4c4"/><path d="M14 1l16 0-16 15z" fill="#e4e4e4"/><path d="M2 12h16v18H2z" fill="#e0904a"/><path d="M2 12l16 18" stroke="#3a3a3a" stroke-width="1.2" fill="none"/></svg>
<svg style="left:1766.5px;top:160.5px;" width="41" height="41" viewBox="0 0 32 32"><path d="M4 12l10-5 8 4-10 5z" fill="#e0904a"/><path d="M10 18l10-5 10 5-10 5z" fill="#c4c4c4"/><path d="M12 16l8-4 6 3-8 4z" fill="#e0904a"/></svg>
<svg style="left:1820px;top:160.5px;" width="41" height="41" viewBox="0 0 32 32"><path d="M3 3h26v26H3zM3 3l26 26M29 3L3 29" stroke="#c4c4c4" stroke-width="1.2" fill="none"/><rect x="12" y="12" width="8" height="8" fill="#444" stroke="#e0904a" stroke-width="1.500"/><rect x="1" y="1" width="4" height="4" fill="#444" stroke="#eee" stroke-width="1"/><rect x="27" y="1" width="4" height="4" fill="#444" stroke="#eee" stroke-width="1"/><rect x="1" y="27" width="4" height="4" fill="#444" stroke="#eee" stroke-width="1"/><rect x="27" y="27" width="4" height="4" fill="#444" stroke="#eee" stroke-width="1"/><rect x="14" y="1" width="4" height="4" fill="#444" stroke="#eee" stroke-width="1"/><rect x="14" y="27" width="4" height="4" fill="#444" stroke="#eee" stroke-width="1"/></svg>
<svg style="left:1873.2px;top:160.5px;" width="41" height="41" viewBox="0 0 32 32"><circle cx="22" cy="10" r="9" fill="#e0904a"/><path d="M13 10h18M22 1v18M16 4c4 3 4 9 0 12M28 4c-4 3-4 9 0 12" stroke="#3a3a3a" stroke-width="1.2" fill="none"/><rect x="1" y="14" width="4" height="4" fill="#c4c4c4"/><rect x="1" y="19" width="4" height="4" fill="#c4c4c4"/><rect x="1" y="24" width="4" height="4" fill="#c4c4c4"/><rect x="1" y="29" width="4" height="4" fill="#c4c4c4"/><rect x="6" y="14" width="4" height="4" fill="#c4c4c4"/><rect x="6" y="19" width="4" height="4" fill="#c4c4c4"/><rect x="6" y="24" width="4" height="4" fill="#c4c4c4"/><rect x="6" y="29" width="4" height="4" fill="#c4c4c4"/><rect x="11" y="19" width="4" height="4" fill="#c4c4c4"/><rect x="11" y="24" width="4" height="4" fill="#c4c4c4"/><rect x="11" y="29" width="4" height="4" fill="#c4c4c4"/><rect x="16" y="19" width="4" height="4" fill="#c4c4c4"/><rect x="16" y="24" width="4" height="4" fill="#c4c4c4"/><rect x="16" y="29" width="4" height="4" fill="#c4c4c4"/></svg>
<div style="left:1929px;top:155px;width:2px;height:52px;background:#8a8a8a;"></div>
<svg style="left:1944.2px;top:160.5px;" width="41" height="41" viewBox="0 0 32 32"><path d="M4 28L6 10l16-6" stroke="#e0904a" stroke-width="1.2" fill="none"/><path d="M12 26L28 6l3 3-15 19-5 2z" fill="#c4c4c4"/><rect x="2" y="26" width="4" height="4" fill="#444" stroke="#e0904a" stroke-width="1"/><rect x="4" y="8" width="4" height="4" fill="#444" stroke="#e0904a" stroke-width="1"/><rect x="20" y="2" width="4" height="4" fill="#444" stroke="#e0904a" stroke-width="1"/></svg>
<svg style="left:1996.9px;top:160.5px;" width="41" height="41" viewBox="0 0 32 32"><path d="M4 4h24M4 28h24M4 4v24M28 4v24" stroke="#c4c4c4" stroke-width="1.2" fill="none"/><path d="M16 4v24" stroke="#e0904a" stroke-width="1.4" fill="none"/><rect x="2" y="2" width="4" height="4" fill="#444" stroke="#eee" stroke-width="1"/><rect x="26" y="2" width="4" height="4" fill="#444" stroke="#eee" stroke-width="1"/><rect x="2" y="26" width="4" height="4" fill="#444" stroke="#eee" stroke-width="1"/><rect x="26" y="26" width="4" height="4" fill="#444" stroke="#eee" stroke-width="1"/><rect x="14" y="2" width="4" height="4" fill="#444" stroke="#e0904a" stroke-width="1"/><rect x="14" y="26" width="4" height="4" fill="#444" stroke="#e0904a" stroke-width="1"/><rect x="2" y="14" width="4" height="4" fill="#444" stroke="#eee" stroke-width="1"/><rect x="26" y="14" width="4" height="4" fill="#444" stroke="#eee" stroke-width="1"/></svg>
<svg style="left:2051.5px;top:160.5px;" width="41" height="41" viewBox="0 0 32 32"><path d="M4 4h8v10h-8z" stroke="#c4c4c4" stroke-width="1.2" fill="none" stroke-dasharray="2 2"/><path d="M10 28L26 10l3 3-14 16-5 2z" fill="#c4c4c4"/><rect x="3" y="25" width="4" height="4" fill="#e0904a"/><rect x="2" y="2" width="3.500" height="3.500" fill="#444" stroke="#eee" stroke-width="1"/><rect x="10" y="2" width="3.500" height="3.500" fill="#444" stroke="#eee" stroke-width="1"/><rect x="2" y="12" width="3.500" height="3.500" fill="#444" stroke="#eee" stroke-width="1"/><rect x="10" y="12" width="3.500" height="3.500" fill="#444" stroke="#eee" stroke-width="1"/></svg>
<div style="left:2105.8px;top:155px;width:2px;height:52px;background:#8a8a8a;"></div>
<svg style="left:2123.1px;top:160.5px;" width="41" height="41" viewBox="0 0 32 32"><rect x="2" y="3" width="22" height="22" fill="#5fb890"/><rect x="17.5" y="17.5" width="13.200000000000001" height="13.200000000000001" fill="#e8e8e8"/><rect x="17.5" y="17.5" width="4.4" height="4.4" fill="#333"/><rect x="17.5" y="26.3" width="4.4" height="4.4" fill="#333"/><rect x="21.9" y="21.9" width="4.4" height="4.4" fill="#333"/><rect x="26.3" y="17.5" width="4.4" height="4.4" fill="#333"/><rect x="26.3" y="26.3" width="4.4" height="4.4" fill="#333"/></svg>
<svg style="left:2175.3px;top:160.5px;" width="41" height="41" viewBox="0 0 32 32"><path d="M2 4c7 5 17 5 24 0v18c-7 5-17 5-24 0z" fill="#5fb890"/><rect x="17.5" y="17.5" width="13.200000000000001" height="13.200000000000001" fill="#e8e8e8"/><rect x="17.5" y="17.5" width="4.4" height="4.4" fill="#333"/><rect x="17.5" y="26.3" width="4.4" height="4.4" fill="#333"/><rect x="21.9" y="21.9" width="4.4" height="4.4" fill="#333"/><rect x="26.3" y="17.5" width="4.4" height="4.4" fill="#333"/><rect x="26.3" y="26.3" width="4.4" height="4.4" fill="#333"/></svg>
<svg style="left:2228.5px;top:160.5px;" width="41" height="41" viewBox="0 0 32 32"><path d="M3 5c7 6 17 6 24 0c2 12-4 22-12 22S1 17 3 5z" fill="#5fb890"/><rect x="17.5" y="17.5" width="13.200000000000001" height="13.200000000000001" fill="#e8e8e8"/><rect x="17.5" y="17.5" width="4.4" height="4.4" fill="#333"/><rect x="17.5" y="26.3" width="4.4" height="4.4" fill="#333"/><rect x="21.9" y="21.9" width="4.4" height="4.4" fill="#333"/><rect x="26.3" y="17.5" width="4.4" height="4.4" fill="#333"/><rect x="26.3" y="26.3" width="4.4" height="4.4" fill="#333"/></svg>
<svg style="left:2282.1px;top:160.5px;" width="41" height="41" viewBox="0 0 32 32"><path d="M14 2l12 6v13l-12 6-12-6V8z" fill="#5fb890"/><path d="M2 8l12 6 12-6M14 14v13" stroke="#3c7a5e" stroke-width="1.2" fill="none"/><rect x="17.5" y="17.5" width="13.200000000000001" height="13.200000000000001" fill="#e8e8e8"/><rect x="17.5" y="17.5" width="4.4" height="4.4" fill="#333"/><rect x="17.5" y="26.3" width="4.4" height="4.4" fill="#333"/><rect x="21.9" y="21.9" width="4.4" height="4.4" fill="#333"/><rect x="26.3" y="17.5" width="4.4" height="4.4" fill="#333"/><rect x="26.3" y="26.3" width="4.4" height="4.4" fill="#333"/></svg>
<svg style="left:2334.5px;top:160.5px;" width="41" height="41" viewBox="0 0 32 32"><path d="M3 24c4-12 10 2 14-10s8-8 8-12" stroke="#5fb890" stroke-width="3" fill="none"/><path d="M7 28c4-10 10 0 14-10" stroke="#5fb890" stroke-width="2" fill="none"/><rect x="17.5" y="17.5" width="13.200000000000001" height="13.200000000000001" fill="#e8e8e8"/><rect x="17.5" y="17.5" width="4.4" height="4.4" fill="#333"/><rect x="17.5" y="26.3" width="4.4" height="4.4" fill="#333"/><rect x="21.9" y="21.9" width="4.4" height="4.4" fill="#333"/><rect x="26.3" y="17.5" width="4.4" height="4.4" fill="#333"/><rect x="26.3" y="26.3" width="4.4" height="4.4" fill="#333"/></svg>
<svg style="left:2386.5px;top:160.5px;" width="41" height="41" viewBox="0 0 32 32"><rect x="2" y="2" width="28" height="28" fill="#5fb890"/><rect x="2" y="2" width="28" height="4" fill="#e4e4e4"/><rect x="6" y="9" width="18" height="18" fill="#e8e8e8"/><rect x="6.0" y="9.0" width="6" height="6" fill="#333"/><rect x="6.0" y="21.0" width="6" height="6" fill="#333"/><rect x="12.0" y="15.0" width="6" height="6" fill="#333"/><rect x="18.0" y="9.0" width="6" height="6" fill="#333"/><rect x="18.0" y="21.0" width="6" height="6" fill="#333"/></svg>
<svg style="left:2438.1px;top:160.5px;" width="41" height="41" viewBox="0 0 32 32"><path d="M2 6l28 20M30 6L2 26" stroke="#5fb890" stroke-width="3" fill="none"/><path d="M2 26v-7l6 5zM30 26v-7l-6 5z" fill="#5fb890"/><rect x="11" y="4" width="10.2" height="10.2" fill="#e8e8e8"/><rect x="11.0" y="4.0" width="3.4" height="3.4" fill="#333"/><rect x="11.0" y="10.8" width="3.4" height="3.4" fill="#333"/><rect x="14.4" y="7.4" width="3.4" height="3.4" fill="#333"/><rect x="17.8" y="4.0" width="3.4" height="3.4" fill="#333"/><rect x="17.8" y="10.8" width="3.4" height="3.4" fill="#333"/></svg>
<svg style="left:2491.5px;top:160.5px;" width="41" height="41" viewBox="0 0 32 32"><path d="M4 28C14 30 28 18 24 4" stroke="#5fb890" stroke-width="1.2" fill="none"/><path d="M6 2l14 16 6 10-10-6z" fill="#c4c4c4"/><path d="M28 3L10 22l-6 6 3 0 6-4z" fill="#e8e8e8"/></svg>
<div style="left:66px;top:224px;width:3.6px;height:1696px;background:#3a3a3a;"></div>
<div style="left:1px;top:228px;width:62px;height:7px;background-image:linear-gradient(#8e8e8e 2px,transparent 2px);background-size:100% 5px;-webkit-mask-image:linear-gradient(90deg,#000 2px,transparent 2px);-webkit-mask-size:5px 100%;mask-image:linear-gradient(90deg,#000 2px,transparent 2px);mask-size:5px 100%;"></div>
<svg style="left:13px;top:248.5px;" width="40" height="40" viewBox="0 0 32 32"><path d="M10 2v24l6-5 4.500 9 4-2-4.500-9 8-.5z" fill="#d0d0d0"/></svg>
<svg style="left:11px;top:302px;" width="44" height="44" viewBox="0 0 32 32"><ellipse cx="13" cy="11" rx="10" ry="7" fill="none" stroke="#3eb4c4" stroke-width="2" stroke-dasharray="4 2.500" transform="rotate(-20 13 11)"/><path d="M15 10v17l4-3.500 3 6.500 3-1.500-3-6.500 6-.5z" fill="#d0d0d0"/></svg>
<svg style="left:11px;top:356.4px;" width="44" height="44" viewBox="0 0 32 32"><ellipse cx="13" cy="21" rx="10" ry="6" fill="none" stroke="#3eb4c4" stroke-width="2" stroke-dasharray="4 2.500" transform="rotate(20 13 21)"/><path d="M18 14L28 3l2 2-10 11z" fill="#d0d0d0"/><path d="M12 22c0-5 3-7 6-7l2 2c0 3-2 6-8 5z" fill="#d0d0d0"/></svg>
<div style="left:5.8px;top:407px;width:54.4px;height:53.7px;background:#5285a6;border-radius:2px;"></div>
<svg style="left:11px;top:411.9px;" width="44" height="44" viewBox="0 0 32 32"><rect x="10.500" y="10.500" width="11" height="11" rx="1" fill="#d8d8d8"/><g fill="none" stroke="#9cc4dc" stroke-width="1.300"><path d="M12 7l4-4 4 4z"/><path d="M12 25l4 4 4-4z"/><path d="M7 12l-4 4 4 4z"/><path d="M25 12l4 4-4 4z"/></g></svg>
<svg style="left:11px;top:467px;" width="44" height="44" viewBox="0 0 32 32"><path d="M16 9l7 7-7 7-7-7z" fill="#d0d0d0"/><path d="M27 20a12 12 0 1 1-2-11" fill="none" stroke="#3eb4c4" stroke-width="1.800"/><path d="M24.500 17h6l-3 4z" fill="#3eb4c4"/></svg>
<svg style="left:11px;top:521.4px;" width="44" height="44" viewBox="0 0 32 32"><rect x="5" y="4" width="23" height="23" fill="none" stroke="#3eb4c4" stroke-width="1.800" stroke-dasharray="4 2"/><rect x="4" y="18" width="10" height="10" fill="#d0d0d0"/><path d="M15 17v-5h5" stroke="#3eb4c4" stroke-width="1.800" fill="none"/></svg>
<svg style="left:13px;top:634.3px;" width="40" height="40" viewBox="0 0 32 32"><path d="M24 6L10 16l14 12-7-12z" fill="#a88ad8"/><circle cx="25" cy="5" r="3" fill="#c4b0ec"/><circle cx="8" cy="17" r="3" fill="#c4b0ec"/></svg>
<div style="left:6px;top:689px;width:54px;height:2px;background:#999;"></div>
<div style="left:11.6px;top:704.8px;width:42.7px;height:41.9px;background:#d0d0d0;"></div>
<div style="left:14.4px;top:707.6px;width:37.1px;height:36.3px;background:#444;border:1px solid #2b2b2b;box-sizing:border-box;"></div>
<svg style="left:18px;top:710.8px;" width="30" height="30" viewBox="0 0 32 32"><path d="M16 5l6 4.500-6 4.500-6-4.500zM8 11.500l6 4.500-6 4.500-6-4.500zM24 11.500l6 4.500-6 4.500-6-4.500zM16 18l6 4.500-6 4.500-6-4.500z" fill="#222"/></svg>
<div style="left:12px;top:760px;width:20px;height:20px;background:#444;border:1px solid #222;box-sizing:border-box;"></div>
<div style="left:16px;top:769.4px;width:12px;height:1.3px;background:#d0d0d0;"></div>
<div style="left:21.4px;top:764px;width:1.3px;height:12px;background:#d0d0d0;"></div>
<div style="left:34px;top:760px;width:20px;height:20px;background:#d0d0d0;border:1px solid #222;box-sizing:border-box;"></div>
<svg style="left:38px;top:766px" width="12" height="8" viewBox="0 0 12 8"><path d="M6 0l6 4-6 4-6-4z" fill="#222"/></svg>
<div style="left:12px;top:782px;width:20px;height:20px;background:#444;border:1px solid #222;box-sizing:border-box;"></div>
<div style="left:16px;top:791.4px;width:12px;height:1.3px;background:#d0d0d0;"></div>
<div style="left:21.4px;top:786px;width:1.3px;height:12px;background:#d0d0d0;"></div>
<div style="left:34px;top:782px;width:20px;height:20px;background:#444;border:1px solid #222;box-sizing:border-box;"></div>
<div style="left:38px;top:791.4px;width:12px;height:1.3px;background:#d0d0d0;"></div>
<div style="left:43.4px;top:786px;width:1.3px;height:12px;background:#d0d0d0;"></div>
<div style="left:12px;top:815px;width:20px;height:42px;background:#444;border:1px solid #222;box-sizing:border-box;"></div>
<div style="left:16px;top:835.4px;width:12px;height:1.3px;background:#d0d0d0;"></div>
<div style="left:21.4px;top:830px;width:1.3px;height:12px;background:#d0d0d0;"></div>
<div style="left:34px;top:815px;width:20px;height:42px;background:#d0d0d0;border:1px solid #222;box-sizing:border-box;"></div>
<svg style="left:38px;top:832px" width="12" height="8" viewBox="0 0 12 8"><path d="M6 0l6 4-6 4-6-4z" fill="#222"/></svg>
<div style="left:12px;top:870px;width:42px;height:42px;background:#444;border:1px solid #222;box-sizing:border-box;outline:1px solid #777;outline-offset:-2px;"></div>
<svg style="left:16px;top:874px;" width="34" height="34" viewBox="0 0 32 32"><g stroke="#d0d0d0" stroke-width="1.200" fill="none"><path d="M6 5h10M8 7v20M8 13h4M8 20h4M8 27h4M14 13h12M14 20h9M14 27h12"/></g><g fill="#d0d0d0"><rect x="4" y="3" width="4" height="4"/><rect x="11" y="11" width="4" height="4"/><rect x="11" y="18" width="4" height="4"/><rect x="11" y="25" width="4" height="4"/></g></svg>
<div style="left:6px;top:926px;width:54px;height:2px;background:#999;"></div>
<svg style="left:14px;top:944px;" width="40" height="40" viewBox="0 0 32 32"><circle cx="13" cy="13" r="9" fill="none" stroke="#d8d8d8" stroke-width="3.200"/><path d="M19.500 19.500l9 9" stroke="#d8d8d8" stroke-width="4" stroke-linecap="round"/></svg>
<svg style="left:10px;top:1863px" width="46" height="50" viewBox="0 0 46 50"><path d="M2 6l6-5h36v32l-6 5H2z" fill="#35b0d0"/><path d="M2 6l6-5v34l-6 5z" fill="#8fdcf0"/><path d="M6 36h40v13H6z" fill="#1f6f8f"/><text x="25" y="27" font-size="24" font-weight="700" text-anchor="middle" fill="#fff" font-family="Liberation Sans,sans-serif">M</text><text x="25" y="46" font-size="10" font-weight="700" text-anchor="middle" fill="#e8f8ff" font-family="Liberation Sans,sans-serif">AYA</text></svg>
<div style="left:73.5px;top:226.5px;width:1666.5px;height:1690.5px;background:#444;border:1px solid #8c8c8c;box-sizing:border-box;"></div>
<span class="s" style="left:88.5px;top:234.35px;font-size:16px;line-height:21px;color:#cfcfcf;transform:scaleX(0.9347);">File</span>
<span class="s" style="left:138.6px;top:234.35px;font-size:16px;line-height:21px;color:#cfcfcf;transform:scaleX(0.9575);">Edit</span>
<span class="s" style="left:190px;top:234.35px;font-size:16px;line-height:21px;color:#cfcfcf;transform:scaleX(1.0184);">History</span>
<span class="s" style="left:266.3px;top:234.35px;font-size:16px;line-height:21px;color:#cfcfcf;transform:scaleX(0.9945);">Command</span>
<span class="s" style="left:365.3px;top:234.35px;font-size:16px;line-height:21px;color:#cfcfcf;transform:scaleX(0.8847);">Tabs</span>
<span class="s" style="left:421.6px;top:234.35px;font-size:16px;line-height:21px;color:#cfcfcf;transform:scaleX(0.8871);">Panels</span>
<span class="s" style="left:491.5px;top:234.35px;font-size:16px;line-height:21px;color:#cfcfcf;transform:scaleX(0.9785);">Help</span>
<div style="left:556px;top:262.7px;width:35px;height:35px;background:#5285a6;border-radius:2px;"></div>
<svg style="left:80.5px;top:265px;" width="30" height="30" viewBox="0 0 32 32"><path d="M2 10h8l2 3h12v4H8L4 28H2z" fill="#c8c8c8"/><path d="M8 18h20l-4 10H4z" fill="#c8c8c8"/><rect x="10" y="3" width="16" height="10" fill="#3eb4c4"/><path d="M12 6h12M12 9h12" stroke="#2a6a78" stroke-width="1.200"/></svg>
<svg style="left:120px;top:265px;" width="30" height="30" viewBox="0 0 32 32"><path d="M2 10h8l2 3h12v4H8L4 28H2z" fill="#c8c8c8"/><path d="M8 18h20l-4 10H4z" fill="#c8c8c8"/><rect x="10" y="3" width="16" height="10" fill="#3eb4c4"/><path d="M20 20l9 5-9 5z" fill="#3eb4c4"/></svg>
<svg style="left:162px;top:265px;" width="30" height="30" viewBox="0 0 32 32"><path d="M4 4h21l3 3v21H4z" fill="#c8c8c8"/><rect x="9" y="4" width="12" height="8" fill="#444"/><rect x="8" y="18" width="16" height="10" fill="#444"/><rect x="10" y="20" width="6" height="6" fill="#c8c8c8"/></svg>
<svg style="left:203px;top:265px;" width="30" height="30" viewBox="0 0 32 32"><path d="M10 2h16l3 3v15H10z" fill="#c8c8c8"/><rect x="14" y="2" width="9" height="6" fill="#444"/><rect x="13" y="12" width="12" height="8" fill="#444"/><rect x="2" y="20" width="22" height="9" fill="#3eb4c4"/><path d="M5 26h3M10 26h3M15 26h3" stroke="#244" stroke-width="2"/></svg>
<svg style="left:253px;top:265px;" width="30" height="30" viewBox="0 0 32 32"><rect x="3" y="5" width="22" height="10" fill="#3eb4c4"/><rect x="3" y="17" width="22" height="10" fill="none" stroke="#888" stroke-width="1.200" stroke-dasharray="3 2"/><path d="M22 2l7 7M29 2l-7 7" stroke="#c8c8c8" stroke-width="2.200"/></svg>
<svg style="left:294.4px;top:265px;" width="30" height="30" viewBox="0 0 32 32"><rect x="3" y="5" width="22" height="10" fill="none" stroke="#888" stroke-width="1.200" stroke-dasharray="3 2"/><rect x="3" y="17" width="22" height="10" fill="#3eb4c4"/><path d="M20 22l8 8M28 22l-8 8" stroke="#c8c8c8" stroke-width="2.200"/></svg>
<svg style="left:335.5px;top:265px;" width="30" height="30" viewBox="0 0 32 32"><rect x="3" y="5" width="22" height="10" fill="#3eb4c4"/><rect x="3" y="17" width="22" height="10" fill="#3eb4c4"/><path d="M3 10h22M3 22h22" stroke="#2a6a78" stroke-width="1"/><path d="M19 10l8 8M27 10l-8 8" stroke="#c8c8c8" stroke-width="2.200"/></svg>
<svg style="left:385px;top:265px;" width="30" height="30" viewBox="0 0 32 32"><rect x="5" y="5" width="22" height="10" fill="#3eb4c4"/><rect x="5" y="17" width="22" height="10" fill="none" stroke="#888" stroke-width="1.200" stroke-dasharray="3 2"/></svg>
<svg style="left:425.6px;top:265px;" width="30" height="30" viewBox="0 0 32 32"><rect x="5" y="5" width="22" height="10" fill="none" stroke="#888" stroke-width="1.200" stroke-dasharray="3 2"/><rect x="5" y="17" width="22" height="10" fill="#3eb4c4"/></svg>
<svg style="left:466.4px;top:265px;" width="30" height="30" viewBox="0 0 32 32"><rect x="5" y="5" width="22" height="10" fill="#3eb4c4"/><rect x="5" y="17" width="22" height="10" fill="#3eb4c4"/><path d="M5 10h22M5 22h22" stroke="#2a6a78" stroke-width="1"/></svg>
<svg style="left:517.6px;top:265px;" width="30" height="30" viewBox="0 0 32 32"><rect x="4" y="4" width="22" height="14" fill="#3eb4c4"/><path d="M7 14l3-7M11 14l3-7M16 14h2M20 14h2" stroke="#244" stroke-width="1.300"/><path d="M12 18l4 4 4-4z" fill="#3eb4c4"/><path d="M19 20l9 5-9 5z" fill="#3eb4c4"/></svg>
<svg style="left:558.5px;top:265px;" width="30" height="30" viewBox="0 0 32 32"><path d="M13 7h14M13 16h14M13 25h14" stroke="#e8e8e8" stroke-width="2.600"/><g font-size="8" fill="#e8e8e8" font-family="Liberation Sans,sans-serif" font-weight="700"><text x="4" y="10">1</text><text x="4" y="19">2</text><text x="4" y="28">3</text></g></svg>
<svg style="left:607.3px;top:265px;" width="30" height="30" viewBox="0 0 32 32"><path d="M3 14l10 6-10 6z" fill="#3eb4c4"/><path d="M14 4l10 6-10 6z" fill="#3eb4c4"/></svg>
<svg style="left:648.8px;top:265px;" width="30" height="30" viewBox="0 0 32 32"><path d="M7 3l19 13-19 13z" fill="#3eb4c4"/></svg>
<svg style="left:885.6px;top:265px;" width="30" height="30" viewBox="0 0 32 32"><circle cx="12" cy="14" r="8" fill="none" stroke="#3eb4c4" stroke-width="2.600"/><path d="M18 20l8 9" stroke="#3eb4c4" stroke-width="3.600"/><path d="M26 2v9M22 8l4 4 4-4" stroke="#c8c8c8" stroke-width="2" fill="none"/></svg>
<svg style="left:926px;top:265px;" width="30" height="30" viewBox="0 0 32 32"><circle cx="12" cy="14" r="8" fill="none" stroke="#3eb4c4" stroke-width="2.600"/><path d="M18 20l8 9" stroke="#3eb4c4" stroke-width="3.600"/><path d="M26 12V3M22 6l4-4 4 4" stroke="#c8c8c8" stroke-width="2" fill="none"/></svg>
<svg style="left:1027.9px;top:265px;" width="30" height="30" viewBox="0 0 32 32"><path d="M4 3v14h8M9 13l4 4-4 4" stroke="#c8c8c8" stroke-width="2" fill="none"/><path d="M15 6h14M15 15h14M15 24h14" stroke="#3eb4c4" stroke-width="2"/></svg>
<div style="left:243.3px;top:264px;width:1px;height:33px;background:#2f2f2f;"></div>
<div style="left:374.9px;top:264px;width:1px;height:33px;background:#2f2f2f;"></div>
<div style="left:506.9px;top:264px;width:1px;height:33px;background:#2f2f2f;"></div>
<div style="left:598.1px;top:264px;width:1px;height:33px;background:#2f2f2f;"></div>
<div style="left:688.9px;top:264px;width:1px;height:33px;background:#2f2f2f;"></div>
<div style="left:966.1px;top:264px;width:1px;height:33px;background:#2f2f2f;"></div>
<div style="left:698px;top:264px;width:178px;height:28px;background:#2b2b2b;border-radius:3px;"></div>
<div style="left:975px;top:264px;width:44px;height:28px;background:#2b2b2b;border-radius:3px;"></div>
<div style="left:74.5px;top:302.3px;width:1645.5px;height:785px;background:#2e2e2e;"></div>
<div style="left:1720px;top:302.3px;width:18.5px;height:785px;background:#343434;"></div>
<svg style="left:1720px;top:305px" width="18" height="14" viewBox="0 0 18 14"><path d="M3 10l6-6 6 6z" fill="#aaa"/></svg>
<svg style="left:1720px;top:1071px" width="18" height="14" viewBox="0 0 18 14"><path d="M3 4l6 6 6-6z" fill="#aaa"/></svg>
<div style="left:1721px;top:1029px;width:16px;height:38px;background:#585858;border-radius:8px;"></div>
<div class="c" style="left:74.500px;top:302.300px;width:1645.500px;height:785px;overflow:hidden">
<span class="m" style="left:5.1px;top:0.22px;font-size:18.33px;line-height:24px;color:#b8b8b8"># </span>
<span class="j" style="left:25.4px;top:-1.8px;font-size:16.08px;line-height:24px;color:#b8b8b8">階層構造の末端ジョイントを取得する再帰関数</span>
<span class="m" style="left:5.1px;top:20.22px;font-size:18.33px;line-height:24px;color:#b8b8b8">def getEndJoints(root):</span>
<span class="m" style="left:5.1px;top:40.22px;font-size:18.33px;line-height:24px;color:#b8b8b8">    end_joints = []</span>
<span class="m" style="left:5.1px;top:60.22px;font-size:18.33px;line-height:24px;color:#b8b8b8">    children = cmds.listRelatives(root, c=True, type=&quot;joint&quot;)</span>
<span class="m" style="left:5.1px;top:80.22px;font-size:18.33px;line-height:24px;color:#b8b8b8">    if children is None:</span>
<span class="m" style="left:5.1px;top:100.22px;font-size:18.33px;line-height:24px;color:#b8b8b8">        return [root]</span>
<span class="m" style="left:5.1px;top:120.22px;font-size:18.33px;line-height:24px;color:#b8b8b8">    for child in children:</span>
<span class="m" style="left:5.1px;top:140.22px;font-size:18.33px;line-height:24px;color:#b8b8b8">        end_joints.extend(getEndJoints(child))</span>
<span class="m" style="left:5.1px;top:160.22px;font-size:18.33px;line-height:24px;color:#b8b8b8">    return  end_joints</span>
<span class="m" style="left:5.1px;top:200.22px;font-size:18.33px;line-height:24px;color:#b8b8b8">end_joints = getEndJoints(&quot;root&quot;)</span>
<span class="m" style="left:5.1px;top:220.22px;font-size:18.33px;line-height:24px;color:#b8b8b8">cmds.select(end_joints)</span>
<span class="m" style="left:5.1px;top:240.22px;font-size:18.33px;line-height:24px;color:#b8b8b8">onSetCurrentLayout &quot;General&quot;;</span>
<span class="m" style="left:5.1px;top:260.22px;font-size:18.33px;line-height:24px;color:#b8b8b8">onSetCurrentLayout &quot;General2&quot;;</span>
<span class="m" style="left:5.1px;top:280.22px;font-size:18.33px;line-height:24px;color:#b8b8b8">workspaceLayoutManager -delete &quot;General2&quot;;</span>
<span class="m" style="left:5.1px;top:300.22px;font-size:18.33px;line-height:24px;color:#b8b8b8">onSetCurrentLayout &quot;General&quot;;</span>
<span class="m" style="left:5.1px;top:320.22px;font-size:18.33px;line-height:24px;color:#b8b8b8">// 1</span>
<span class="m" style="left:5.1px;top:340.22px;font-size:18.33px;line-height:24px;color:#b8b8b8">select -cl  ;</span>
<span class="m" style="left:5.1px;top:360.22px;font-size:18.33px;line-height:24px;color:#b8b8b8">select -r root root1 ;</span>
<span class="m" style="left:5.1px;top:380.22px;font-size:18.33px;line-height:24px;color:#b8b8b8">workspaceLayoutManager -sa &quot;Scripting&quot;;</span>
<span class="m" style="left:5.1px;top:400.22px;font-size:18.33px;line-height:24px;color:#b8b8b8">onSetCurrentLayout &quot;Scripting&quot;;</span>
<span class="m" style="left:5.1px;top:420.22px;font-size:18.33px;line-height:24px;color:#b8b8b8">// Result: C:/Users/student/Documents/maya/2023/prefs/workspaces/Scripting.json</span>
<span class="m" style="left:5.1px;top:440.22px;font-size:18.33px;line-height:24px;color:#b8b8b8">from maya import cmds</span>
<span class="m" style="left:5.1px;top:480.22px;font-size:18.33px;line-height:24px;color:#b8b8b8"># </span>
<span class="j" style="left:25.4px;top:478.2px;font-size:16.08px;line-height:24px;color:#b8b8b8">階層構造の末端ジョイントを取得する再帰関数</span>
<span class="m" style="left:5.1px;top:500.22px;font-size:18.33px;line-height:24px;color:#b8b8b8">def getEndJoints(root):</span>
<span class="m" style="left:5.1px;top:520.22px;font-size:18.33px;line-height:24px;color:#b8b8b8">    end_joints = []</span>
<span class="m" style="left:5.1px;top:540.22px;font-size:18.33px;line-height:24px;color:#b8b8b8">    children = cmds.listRelatives(root, c=True, type=&quot;joint&quot;)</span>
<span class="m" style="left:5.1px;top:560.22px;font-size:18.33px;line-height:24px;color:#b8b8b8">    if children is None:</span>
<span class="m" style="left:5.1px;top:580.22px;font-size:18.33px;line-height:24px;color:#b8b8b8">        return [root]</span>
<span class="m" style="left:5.1px;top:600.22px;font-size:18.33px;line-height:24px;color:#b8b8b8">    for child in children:</span>
<span class="m" style="left:5.1px;top:620.22px;font-size:18.33px;line-height:24px;color:#b8b8b8">        end_joints.extend(getEndJoints(child))</span>
<span class="m" style="left:5.1px;top:640.22px;font-size:18.33px;line-height:24px;color:#b8b8b8">    return  end_joints</span>
<span class="m" style="left:5.1px;top:680.22px;font-size:18.33px;line-height:24px;color:#b8b8b8">end_joints = getEndJoints(&quot;root&quot;)</span>
<span class="m" style="left:5.1px;top:700.22px;font-size:18.33px;line-height:24px;color:#b8b8b8">cmds.select(end_joints)</span>
<span class="m" style="left:5.1px;top:720.22px;font-size:18.33px;line-height:24px;color:#b8b8b8">// Performing AutoSave at 2023/01/12 15:14:42:</span>
<span class="m" style="left:5.1px;top:740.22px;font-size:18.33px;line-height:24px;color:#b8b8b8">//    master file:    __AUTO-SAVE__untitled.mb</span>
<span class="m" style="left:5.1px;top:760.22px;font-size:18.33px;line-height:24px;color:#b8b8b8">//    AutoSave file: E:/.shortcut-targets-by-id/19dM_Zw7LEUfAjB9jZNYvWXCF376H0nH7/maya/mayaMdl/Playstation_2_System_Menu/autosave/__AUTO-SAVE__untitle</span>
</div>
<div style="left:74.5px;top:1087px;width:1645.5px;height:17.7px;background:#343434;"></div>
<svg style="left:78px;top:1087px" width="12" height="18" viewBox="0 0 12 18"><path d="M9 3v12l-7-6z" fill="#aaa"/></svg>
<svg style="left:1704px;top:1087px" width="12" height="18" viewBox="0 0 12 18"><path d="M3 3v12l7-6z" fill="#aaa"/></svg>
<div style="left:94.3px;top:1088px;width:1503.7px;height:15.8px;background:#5d5d5d;border-radius:8px;"></div>
<div style="left:627px;top:1108px;width:556px;height:3px;background-image:radial-gradient(circle,#8a8a8a 0.900px,transparent 1.200px);background-size:5.600px 3px"></div>
<div style="left:74.5px;top:1116.6px;width:1661.5px;height:29.4px;background:#383838;"></div>
<div style="left:74.5px;top:1146px;width:1661.5px;height:1px;background:#4c4c4c;"></div>
<div style="left:79.6px;top:1119.5px;width:114.4px;height:26.5px;background:#353535;border-radius:3px 3px 0 0;border:1px solid #424242;border-bottom:none;box-sizing:border-box;"></div>
<div style="left:198px;top:1119.5px;width:132.7px;height:26.5px;background:#353535;border-radius:3px 3px 0 0;border:1px solid #424242;border-bottom:none;box-sizing:border-box;"></div>
<div style="left:333px;top:1118.5px;width:132.8px;height:28.5px;background:#444;border-radius:3px 3px 0 0;border:1px solid #4c4c4c;border-bottom:none;box-sizing:border-box;"></div>
<div style="left:469.7px;top:1119.5px;width:44.7px;height:26.5px;background:#353535;border-radius:3px 3px 0 0;border:1px solid #424242;border-bottom:none;box-sizing:border-box;"></div>
<svg style="left:97px;top:1124px" width="18" height="19" viewBox="0 0 18 19"><rect x="0" y="0" width="18" height="19" rx="2" fill="#bcbcbc"/><text x="9" y="14" font-size="13" font-weight="700" text-anchor="middle" fill="#333" font-family="Liberation Sans,sans-serif">{;}</text></svg>
<span class="s" style="left:120.3px;top:1123.85px;font-size:16px;line-height:21px;color:#8f8f8f;transform:scaleX(0.9453);">MEL</span>
<svg style="left:163.8px;top:1127.500px" width="14" height="14" viewBox="0 0 14 14"><path d="M2 2l10 10M12 2L2 12" stroke="#c0c0c0" stroke-width="2.400"/></svg>
<svg style="left:214.9px;top:1123.500px" width="19" height="20" viewBox="0 0 19 20"><path d="M5 1h6a3 3 0 0 1 3 3v4a2 2 0 0 1-2 2H7a3 3 0 0 0-3 3v1H2a2 2 0 0 1-2-2V8a3 3 0 0 1 3-3h6V4H5z" fill="#3f7fb5"/><path d="M14 19H8a3 3 0 0 1-3-3v-4a2 2 0 0 1 2-2h5a3 3 0 0 0 3-3V6h2a2 2 0 0 1 2 2v4a3 3 0 0 1-3 3h-6v1h4z" fill="#f0c63c"/><circle cx="7" cy="3.500" r="1" fill="#fff"/><circle cx="12" cy="16.500" r="1" fill="#fff"/></svg>
<span class="s" style="left:239.5px;top:1123.85px;font-size:16px;line-height:21px;color:#8f8f8f;transform:scaleX(0.9897);">Python</span>
<svg style="left:299.7px;top:1127.500px" width="14" height="14" viewBox="0 0 14 14"><path d="M2 2l10 10M12 2L2 12" stroke="#c0c0c0" stroke-width="2.400"/></svg>
<svg style="left:351.1px;top:1123.500px" width="19" height="20" viewBox="0 0 19 20"><path d="M5 1h6a3 3 0 0 1 3 3v4a2 2 0 0 1-2 2H7a3 3 0 0 0-3 3v1H2a2 2 0 0 1-2-2V8a3 3 0 0 1 3-3h6V4H5z" fill="#3f7fb5"/><path d="M14 19H8a3 3 0 0 1-3-3v-4a2 2 0 0 1 2-2h5a3 3 0 0 0 3-3V6h2a2 2 0 0 1 2 2v4a3 3 0 0 1-3 3h-6v1h4z" fill="#f0c63c"/><circle cx="7" cy="3.500" r="1" fill="#fff"/><circle cx="12" cy="16.500" r="1" fill="#fff"/></svg>
<span class="s" style="left:375.4px;top:1123.85px;font-size:16px;line-height:21px;color:#e4e4e4;transform:scaleX(0.9897);">Python</span>
<svg style="left:436px;top:1127.500px" width="14" height="14" viewBox="0 0 14 14"><path d="M2 2l10 10M12 2L2 12" stroke="#c0c0c0" stroke-width="2.400"/></svg>
<span class="s" style="left:486.03px;top:1123.85px;font-size:16px;line-height:21px;color:#d0d0d0;font-weight:700;">+</span>
<div style="left:74.5px;top:1147px;width:36px;height:760.3px;background:#444;"></div>
<div style="left:110.2px;top:1147px;width:1px;height:760.3px;background:#b4b4b4;"></div>
<div style="left:111.2px;top:1147px;width:1622.6px;height:760.3px;background:#2b2b2b;"></div>
<div style="left:114.9px;top:1150.9px;width:236.3px;height:21.4px;background:#5285a6;"></div>
<div style="left:114.9px;top:1172.1px;width:5.2px;height:19.95px;background:#5285a6;"></div>
<div style="left:114.9px;top:1191.85px;width:363.7px;height:20.4px;background:#5285a6;"></div>
<div style="left:114.9px;top:1212.05px;width:258.3px;height:21.4px;background:#5285a6;"></div>
<div style="left:114.9px;top:1233.25px;width:214.3px;height:19.95px;background:#5285a6;"></div>
<div style="left:114.9px;top:1253px;width:676.3px;height:21.4px;background:#5285a6;"></div>
<div style="left:114.9px;top:1274.2px;width:269.3px;height:21.4px;background:#5285a6;"></div>
<div style="left:114.9px;top:1295.4px;width:236.3px;height:21.4px;background:#5285a6;"></div>
<div style="left:114.9px;top:1316.6px;width:291.3px;height:21.4px;background:#5285a6;"></div>
<div style="left:114.9px;top:1337.8px;width:511.3px;height:19.95px;background:#5285a6;"></div>
<div style="left:114.9px;top:1357.55px;width:247.3px;height:21.4px;background:#5285a6;"></div>
<div style="left:114.9px;top:1378.75px;width:5.2px;height:19.95px;background:#5285a6;"></div>
<div style="left:114.9px;top:1398.5px;width:368.3px;height:19.95px;background:#5285a6;"></div>
<div style="left:114.9px;top:1418.25px;width:252.5px;height:19.95px;background:#5285a6;"></div>
<span class="m" style="left:97.6px;top:1150.82px;font-size:18.33px;line-height:24px;color:#b8b8b8;">1</span>
<span class="m" style="left:115.7px;top:1150.82px;font-size:18.33px;line-height:24px;color:#e6e6e6"><b>from</b> maya <b>import</b> cmds</span>
<span class="m" style="left:97.6px;top:1171.42px;font-size:18.33px;line-height:24px;color:#b8b8b8;">2</span>
<span class="m" style="left:97.6px;top:1192.27px;font-size:18.33px;line-height:24px;color:#b8b8b8;">3</span>
<span class="m" style="left:115.7px;top:1192.27px;font-size:18.33px;line-height:24px;color:#e6e6e6"># </span>
<span class="j" style="left:136px;top:1190.25px;font-size:16.08px;line-height:24px;color:#e6e6e6">階層構造の末端ジョイントを取得する再帰関数</span>
<span class="m" style="left:97.6px;top:1211.97px;font-size:18.33px;line-height:24px;color:#b8b8b8;">4</span>
<span class="m" style="left:115.7px;top:1211.97px;font-size:18.33px;line-height:24px;color:#e6e6e6"><b>def</b> getEndJoints(root):</span>
<span class="m" style="left:97.6px;top:1232.57px;font-size:18.33px;line-height:24px;color:#b8b8b8;">5</span>
<span class="m" style="left:115.7px;top:1232.57px;font-size:18.33px;line-height:24px;color:#e6e6e6">    end_joints = []</span>
<span class="m" style="left:97.6px;top:1252.92px;font-size:18.33px;line-height:24px;color:#b8b8b8;">6</span>
<span class="m" style="left:115.7px;top:1252.92px;font-size:18.33px;line-height:24px;color:#e6e6e6">    children = cmds.<i>listRelatives</i>(root, c=<b>True</b>, type=&quot;joint&quot;)</span>
<span class="m" style="left:97.6px;top:1274.12px;font-size:18.33px;line-height:24px;color:#b8b8b8;">7</span>
<span class="m" style="left:115.7px;top:1274.12px;font-size:18.33px;line-height:24px;color:#e6e6e6">    <b>if</b> children <b>is</b> <b>None</b>:</span>
<span class="m" style="left:97.6px;top:1295.32px;font-size:18.33px;line-height:24px;color:#b8b8b8;">8</span>
<span class="m" style="left:115.7px;top:1295.32px;font-size:18.33px;line-height:24px;color:#e6e6e6">        <b>return</b> [root]</span>
<span class="m" style="left:97.6px;top:1316.52px;font-size:18.33px;line-height:24px;color:#b8b8b8;">9</span>
<span class="m" style="left:115.7px;top:1316.52px;font-size:18.33px;line-height:24px;color:#e6e6e6">    <b>for</b> child<b> in </b>children:</span>
<span class="m" style="left:86.6px;top:1337.12px;font-size:18.33px;line-height:24px;color:#b8b8b8;">10</span>
<span class="m" style="left:115.7px;top:1337.12px;font-size:18.33px;line-height:24px;color:#e6e6e6">        end_joints.extend(getEndJoints(child))</span>
<span class="m" style="left:86.6px;top:1357.47px;font-size:18.33px;line-height:24px;color:#b8b8b8;">11</span>
<span class="m" style="left:115.7px;top:1357.47px;font-size:18.33px;line-height:24px;color:#e6e6e6">    <b>return</b>  end_joints</span>
<span class="m" style="left:86.6px;top:1378.07px;font-size:18.33px;line-height:24px;color:#b8b8b8;">12</span>
<span class="m" style="left:86.6px;top:1397.82px;font-size:18.33px;line-height:24px;color:#b8b8b8;">13</span>
<span class="m" style="left:115.7px;top:1397.82px;font-size:18.33px;line-height:24px;color:#e6e6e6">end_joints = getEndJoints(&quot;root&quot;)</span>
<span class="m" style="left:86.6px;top:1417.57px;font-size:18.33px;line-height:24px;color:#b8b8b8;">14</span>
<span class="m" style="left:115.7px;top:1417.57px;font-size:18.33px;line-height:24px;color:#e6e6e6">cmds.<i>select</i>(end_joints)</span>
<div style="left:1742px;top:789px;width:2px;height:560px;background-image:linear-gradient(#a8a8a8 2px,transparent 2px);background-size:2px 6px;"></div>
<span class="s" style="left:1761.4px;top:234.35px;font-size:16px;line-height:21px;color:#cfcfcf;transform:scaleX(1.0060);">View</span>
<span class="s" style="left:1821px;top:234.35px;font-size:16px;line-height:21px;color:#cfcfcf;transform:scaleX(0.9809);">Shading</span>
<span class="s" style="left:1904.2px;top:234.35px;font-size:16px;line-height:21px;color:#cfcfcf;transform:scaleX(1.0259);">Lighting</span>
<span class="s" style="left:1987.3px;top:234.35px;font-size:16px;line-height:21px;color:#cfcfcf;transform:scaleX(0.9894);">Show</span>
<span class="s" style="left:2052.5px;top:234.35px;font-size:16px;line-height:21px;color:#cfcfcf;transform:scaleX(0.9489);">Renderer</span>
<span class="s" style="left:2141.4px;top:234.35px;font-size:16px;line-height:21px;color:#cfcfcf;transform:scaleX(0.9034);">Panels</span>
<div style="left:2139.07px;top:258.6px;width:28px;height:28.5px;background:#5285a6;border-radius:2px;"></div>
<div style="left:2385.96px;top:258.6px;width:28.5px;height:28.5px;background:#5285a6;border-radius:2px;"></div>
<div style="left:2226.41px;top:258.6px;width:27.5px;height:28.5px;background:#363636;border-radius:2px;"></div>
<div style="left:2661.97px;top:258.6px;width:28px;height:28.5px;background:#363636;border-radius:2px;"></div>
<div style="left:1753.09px;top:260px;width:1px;height:25px;background:#8a8a8a;"></div>
<div style="left:1752.09px;top:266px;width:3px;height:13px;background:#8a8a8a;"></div>
<svg style="left:1761.94px;top:259.8px;" width="26" height="26" viewBox="0 0 32 32"><path d="M4 4l4-3h22v24l-4 3H4z" fill="#35b0d0"/><path d="M4 4l4-3v24l-4 3z" fill="#8fdcf0"/><text x="19" y="20" font-size="17" font-weight="700" text-anchor="middle" fill="#fff" font-family="Liberation Sans,sans-serif">A</text></svg>
<svg style="left:1790.28px;top:259.8px;" width="26" height="26" viewBox="0 0 32 32"><rect x="7" y="7" width="18" height="18" fill="#3eb4c4"/><path d="M7 1v30M25 1v30M1 7h30M1 25h30" stroke="#c8c8c8" stroke-width="1.600"/></svg>
<svg style="left:1819.39px;top:259.8px;" width="26" height="26" viewBox="0 0 32 32"><rect x="3" y="4" width="26" height="24" fill="#4c5560"/><rect x="6" y="14" width="14" height="11" fill="none" stroke="#3c444c" stroke-width="1.200" stroke-dasharray="2 2"/></svg>
<svg style="left:1848.51px;top:259.8px;" width="26" height="26" viewBox="0 0 32 32"><circle cx="16" cy="16" r="12" fill="#585858"/><path d="M16 16L6 23A12 12 0 0 0 27 21z" fill="#5e4a4a"/></svg>
<svg style="left:1877.62px;top:259.8px;" width="26" height="26" viewBox="0 0 32 32"><rect x="8" y="3" width="21" height="17" fill="#4a5a4a"/><rect x="5" y="7" width="21" height="17" fill="#5a4a4a"/><rect x="2" y="11" width="21" height="17" fill="#4a5560"/><path d="M5 25l6-7 4 4 3-3 4 6z" fill="#3d7a86"/></svg>
<div style="left:1911.86px;top:260px;width:1px;height:25px;background:#8a8a8a;"></div>
<div style="left:1910.86px;top:266px;width:3px;height:13px;background:#8a8a8a;"></div>
<svg style="left:1921.1px;top:259.8px;" width="26" height="26" viewBox="0 0 32 32"><rect x="2" y="9" width="19" height="14" rx="1" fill="#c8c8c8"/><path d="M22 16l8-7v14z" fill="#c8c8c8"/></svg>
<svg style="left:1950.21px;top:259.8px;" width="26" height="26" viewBox="0 0 32 32"><rect x="4" y="4" width="17" height="12" rx="1" fill="#c8c8c8"/><path d="M22 10l8-6v12z" fill="#c8c8c8"/><rect x="4" y="17" width="12" height="11" rx="1.500" fill="#3eb4c4"/><path d="M7 17v-3a3 3 0 0 1 6 0v3" stroke="#3eb4c4" stroke-width="2" fill="none"/><rect x="9" y="20" width="2" height="5" fill="#444"/></svg>
<svg style="left:1979.33px;top:259.8px;" width="26" height="26" viewBox="0 0 32 32"><rect x="6" y="4" width="15" height="11" rx="1" fill="#c8c8c8"/><path d="M22 10l8-6v12z" fill="#c8c8c8"/><circle cx="11" cy="21" r="5.500" fill="none" stroke="#3eb4c4" stroke-width="3.400" stroke-dasharray="2.900 1.400"/><circle cx="11" cy="21" r="4" fill="none" stroke="#3eb4c4" stroke-width="2"/></svg>
<svg style="left:2008.83px;top:259.8px;" width="26" height="26" viewBox="0 0 32 32"><path d="M9 3h14v26l-7-8-7 8z" fill="#c8c8c8"/></svg>
<svg style="left:2037.56px;top:259.8px;" width="26" height="26" viewBox="0 0 32 32"><path d="M18 3v20H6z" fill="#3eb4c4"/><path d="M4 28l5-6h20l-5 6z" fill="none" stroke="#c8c8c8" stroke-width="1.300"/><path d="M12 22l-4 6M20 22l-4 6" stroke="#c8c8c8" stroke-width="1"/></svg>
<svg style="left:2067.06px;top:259.8px;" width="26" height="26" viewBox="0 0 32 32"><circle cx="20" cy="19" r="6" fill="none" stroke="#3eb4c4" stroke-width="2.200"/><path d="M15 24l-7 7" stroke="#3eb4c4" stroke-width="3"/><path d="M10 1l4 4h-3v4h4V6l4 4-4 4v-3h-4v4h3l-4 4-4-4h3v-4H5v3L1 10l4-4v3h4V5H6z" fill="#c8c8c8" transform="scale(.9)"/></svg>
<svg style="left:2095.79px;top:259.8px;" width="26" height="26" viewBox="0 0 32 32"><path d="M6 26l2-7L23 4l5 5-15 15z" fill="#3eb4c4"/><path d="M6 26l2-7 5 5z" fill="#cfeef4"/></svg>
<svg style="left:2094.79px;top:258.500px" width="28" height="29" viewBox="0 0 28 29"><path d="M5 1H1v27h4M23 1h4v27h-4" stroke="#22dd22" stroke-width="1.500" fill="none"/></svg>
<div style="left:2129.64px;top:260px;width:1px;height:25px;background:#8a8a8a;"></div>
<div style="left:2128.64px;top:266px;width:3px;height:13px;background:#8a8a8a;"></div>
<svg style="left:2140.04px;top:259.8px;" width="26" height="26" viewBox="0 0 32 32"><rect x="4" y="4" width="24" height="24" fill="none" stroke="#e8e8e8" stroke-width="1.800"/><path d="M12 4v24M20 4v24M4 12h24M4 20h24" stroke="#e8e8e8" stroke-width="1.500"/></svg>
<svg style="left:2168.77px;top:259.8px;" width="26" height="26" viewBox="0 0 32 32"><rect x="2" y="6" width="28" height="20" fill="none" stroke="#c8c8c8" stroke-width="1.600"/><rect x="4" y="10" width="24" height="12" fill="#333"/><path d="M4 8h24M4 24h24" stroke="#c8c8c8" stroke-width="1.200" stroke-dasharray="2 2"/></svg>
<svg style="left:2197.89px;top:259.8px;" width="26" height="26" viewBox="0 0 32 32"><rect x="2" y="6" width="28" height="20" fill="none" stroke="#c8c8c8" stroke-width="1.600"/><circle cx="16" cy="16" r="6" fill="#3eb4c4"/></svg>
<svg style="left:2227px;top:259.8px;" width="26" height="26" viewBox="0 0 32 32"><rect x="2" y="6" width="28" height="20" fill="#3a3a3a"/><circle cx="16" cy="16" r="6" fill="#4c4c4c"/></svg>
<svg style="left:2255.73px;top:259.8px;" width="26" height="26" viewBox="0 0 32 32"><rect x="2" y="6" width="28" height="20" fill="none" stroke="#c8c8c8" stroke-width="1.600"/><path d="M6 16h20M16 9v14M10 13v6M22 13v6" stroke="#3eb4c4" stroke-width="1.600"/></svg>
<svg style="left:2284.84px;top:259.8px;" width="26" height="26" viewBox="0 0 32 32"><rect x="2" y="6" width="28" height="20" fill="none" stroke="#c8c8c8" stroke-width="1.600"/><path d="M5 23l7-9 5 5 3-3 5 7z" fill="#3eb4c4"/><circle cx="21" cy="12" r="3" fill="#3eb4c4"/></svg>
<svg style="left:2313.96px;top:259.8px;" width="26" height="26" viewBox="0 0 32 32"><rect x="2" y="6" width="28" height="20" fill="none" stroke="#c8c8c8" stroke-width="1.600"/><text x="16" y="24" font-size="19" text-anchor="middle" fill="#3eb4c4" font-family="Liberation Serif,serif">T</text></svg>
<div style="left:2347.81px;top:260px;width:1px;height:25px;background:#8a8a8a;"></div>
<div style="left:2346.81px;top:266px;width:3px;height:13px;background:#8a8a8a;"></div>
<svg style="left:2358.21px;top:259.8px;" width="26" height="26" viewBox="0 0 32 32"><path d="M16 2l12 7v14l-12 7-12-7V9z" fill="none" stroke="#c8c8c8" stroke-width="1.500"/><path d="M4 9l12 7 12-7M16 16v14" stroke="#c8c8c8" stroke-width="1.200" fill="none"/><path d="M16 2v14M4 23l12-7 12 7" stroke="#888" stroke-width=".8" fill="none"/></svg>
<svg style="left:2386.94px;top:259.8px;" width="26" height="26" viewBox="0 0 32 32"><path d="M16 2l12 7v14l-12 7-12-7V9z" fill="#55c4d8"/><path d="M4 9l12 7 12-7-12-7z" fill="#a0e4f0"/><path d="M4 9l12 7v14L4 23z" fill="#3aa4b8"/><path d="M16 2l12 7v14l-12 7-12-7V9zM4 9l12 7 12-7M16 16v14" stroke="#e8f8fc" stroke-width="1.200" fill="none"/></svg>
<svg style="left:2416.05px;top:259.8px;" width="26" height="26" viewBox="0 0 32 32"><circle cx="14" cy="16" r="11" fill="#e0e0e0"/><path d="M20 10h8v4h-8zM24 16h6v4h-6zM20 20h6v4h-6z" fill="#444"/><path d="M22 13h6v3h-6zM22 19h6v3h-6z" fill="#e0e0e0"/></svg>
<svg style="left:2445.17px;top:259.8px;" width="26" height="26" viewBox="0 0 32 32"><path d="M16 2l12 7v14l-12 7-12-7V9z" fill="#55c4d8"/><path d="M4 9l12 7 12-7-12-7z" fill="#a0e4f0"/><path d="M16 2l12 7v14l-12 7-12-7V9zM4 9l12 7 12-7M16 16v14M10 5.500l12 7v14M22 5.500l-12 7v14M4 16l12 7 12-7" stroke="#eee" stroke-width=".9" fill="none"/></svg>
<svg style="left:2474.28px;top:259.8px;" width="26" height="26" viewBox="0 0 32 32"><circle cx="16" cy="16" r="12" fill="#e0e0e0"/><rect x="4.0" y="13.6" width="4.800" height="4.800" fill="#444"/><rect x="8.8" y="8.8" width="4.800" height="4.800" fill="#444"/><rect x="8.8" y="18.4" width="4.800" height="4.800" fill="#444"/><rect x="13.6" y="4.0" width="4.800" height="4.800" fill="#444"/><rect x="13.6" y="13.6" width="4.800" height="4.800" fill="#444"/><rect x="13.6" y="23.2" width="4.800" height="4.800" fill="#444"/><rect x="18.4" y="8.8" width="4.800" height="4.800" fill="#444"/><rect x="18.4" y="18.4" width="4.800" height="4.800" fill="#444"/><rect x="23.2" y="13.6" width="4.800" height="4.800" fill="#444"/></svg>
<svg style="left:2502.62px;top:259.8px;" width="26" height="26" viewBox="0 0 32 32"><path d="M10 13a6 6 0 1 1 12 0c0 4-3 5-3 8h-6c0-3-3-4-3-8z" fill="#e8e8e8"/><rect x="13" y="22" width="6" height="5" fill="#c0c0c0"/><path d="M16 1v3M5 6l2.500 2.500M27 6l-2.500 2.500M2 14h3M27 14h3" stroke="#e8e8e8" stroke-width="1.600"/></svg>
<svg style="left:2532.51px;top:259.8px;" width="26" height="26" viewBox="0 0 32 32"><circle cx="19" cy="14" r="10" fill="#3eb4c4"/><path d="M2 22l8-4M4 26l10-4M10 27l8-3" stroke="#ddd" stroke-width="1.800"/></svg>
<div style="left:2565.59px;top:260px;width:1px;height:25px;background:#8a8a8a;"></div>
<div style="left:2564.59px;top:266px;width:3px;height:13px;background:#8a8a8a;"></div>
<svg style="left:2575.99px;top:259.8px;" width="26" height="26" viewBox="0 0 32 32"><circle cx="17" cy="13" r="10" fill="#d8d8d8"/><path d="M7 13a10 10 0 0 0 20 0c-4 6-16 6-20 0z" fill="#9a9a9a"/><path d="M4 24l20-4M6 28l20-4M8 22l6 8M16 21l6 8" stroke="#3eb4c4" stroke-width="1.200"/></svg>
<svg style="left:2605.11px;top:259.8px;" width="26" height="26" viewBox="0 0 32 32"><circle cx="10" cy="21" r="8" fill="#777"/><circle cx="15" cy="17" r="8" fill="#999"/><circle cx="21" cy="12" r="8" fill="#e0e0e0"/></svg>
<svg style="left:2634.22px;top:259.8px;" width="26" height="26" viewBox="0 0 32 32"><circle cx="16" cy="16" r="10" fill="none" stroke="#3eb4c4" stroke-width="4"/><path d="M20 4l8 4-2 8z" fill="#444"/><path d="M26 16a10 10 0 0 1-10 10" stroke="#e0e0e0" stroke-width="4" fill="none"/></svg>
<svg style="left:2662.56px;top:259.8px;" width="26" height="26" viewBox="0 0 32 32"><rect x="1" y="1" width="30" height="30" fill="#333"/><rect x="6" y="6" width="12" height="12" fill="#3a4a4c"/><rect x="12" y="12" width="14" height="14" fill="#355a60"/></svg>
<div style="left:2696.8px;top:260px;width:1px;height:25px;background:#8a8a8a;"></div>
<div style="left:2695.8px;top:266px;width:3px;height:13px;background:#8a8a8a;"></div>
<svg style="left:2707px;top:259.8px;" width="26" height="26" viewBox="0 0 32 32"><rect x="3" y="3" width="16" height="14" fill="none" stroke="#3eb4c4" stroke-width="1.500" stroke-dasharray="3 2"/><path d="M17 10v17l4-3.500 3 6.500 3-1.500-3-6.500 6-.5z" fill="#c8c8c8"/></svg>
<div style="left:2740.5px;top:260px;width:1px;height:25px;background:#8a8a8a;"></div>
<div style="left:2739.5px;top:266px;width:3px;height:13px;background:#8a8a8a;"></div>
<div style="left:2842.9px;top:260px;width:1px;height:25px;background:#8a8a8a;"></div>
<div style="left:2841.9px;top:266px;width:3px;height:13px;background:#8a8a8a;"></div>
<div style="left:2750.7px;top:260px;width:26px;height:26px;background:#383838;border-radius:2px;"></div>
<div style="left:2780px;top:260px;width:26px;height:26px;background:#383838;border-radius:2px;"></div>
<div style="left:2808.7px;top:260px;width:26px;height:26px;background:#383838;border-radius:2px;"></div>
<svg style="left:2750.7px;top:259.8px;" width="26" height="26" viewBox="0 0 32 32"><rect x="4" y="8" width="16" height="16" fill="#c8c8c8"/><rect x="10" y="4" width="16" height="16" fill="none" stroke="#c8c8c8" stroke-width="2"/><rect x="10" y="8" width="10" height="12" fill="#444"/></svg>
<svg style="left:2780px;top:259.8px;" width="26" height="26" viewBox="0 0 32 32"><rect x="4" y="8" width="16" height="16" fill="none" stroke="#c8c8c8" stroke-width="2"/><rect x="10" y="4" width="16" height="16" fill="#c8c8c8"/><rect x="11" y="9" width="8" height="10" fill="#444"/><rect x="13" y="11" width="8" height="6" fill="#c8c8c8"/></svg>
<svg style="left:2808.7px;top:259.8px;" width="26" height="26" viewBox="0 0 32 32"><rect x="3" y="3" width="26" height="26" fill="none" stroke="#c8c8c8" stroke-width="2"/><path d="M8 8l14 14" stroke="#c8c8c8" stroke-width="2"/><circle cx="11" cy="11" r="4" fill="#c8c8c8"/></svg>
<svg style="left:2853.8px;top:259.8px;" width="26" height="26" viewBox="0 0 32 32"><circle cx="16" cy="16" r="12" fill="#d8d8d8"/><path d="M16 16L10 6h12zM16 16l12 1-6 10zM16 16L8 26 4 15z" fill="#444"/><circle cx="16" cy="16" r="3" fill="#d8d8d8"/></svg>
<div style="left:2882.8px;top:259.8px;width:58.4px;height:26.6px;background:#2b2b2b;border-radius:3px;"></div>
<span class="s" style="left:2892px;top:262.55px;font-size:16px;line-height:21px;color:#d8d8d8;transform:scaleX(0.9634);">0.00</span>
<svg style="left:2945px;top:259.8px;" width="26" height="26" viewBox="0 0 32 32"><path d="M12 4a12 12 0 0 0 0 24z" fill="#d8d8d8"/><rect x="13" y="4" width="13" height="24" rx="2" fill="#d8d8d8"/><path d="M18 8a8 8 0 0 0 0 16z" fill="#444"/></svg>
<div style="left:2974px;top:259.8px;width:58px;height:26.6px;background:#2b2b2b;border-radius:3px;"></div>
<span class="s" style="left:2983.5px;top:262.55px;font-size:16px;line-height:21px;color:#d8d8d8;transform:scaleX(0.9634);">1.00</span>
<div style="left:3035px;top:258.6px;width:28px;height:28.6px;background:#5285a6;border-radius:2px;"></div>
<svg style="left:3038.500px;top:262.400px" width="21" height="21" viewBox="0 0 21 21"><circle cx="10.500" cy="10.500" r="9.500" fill="#3eb4c4" stroke="#2a3a44" stroke-width="1"/><text x="10.500" y="13.500" font-size="8" font-weight="700" text-anchor="middle" fill="#23404a" font-family="Liberation Sans,sans-serif">ON</text></svg>
<div style="left:3066px;top:259.8px;width:267px;height:26.6px;background:#5d5d5d;border-radius:2px;"></div>
<div style="left:3302.8px;top:259.8px;width:1px;height:26.6px;background:#4a4a4a;"></div>
<span class="s" style="left:3071px;top:264.35px;font-size:16px;line-height:21px;color:#d8d8d8;transform:scaleX(0.9483);">ACES 1.0 SDR-video (sRGB)</span>
<svg style="left:3308px;top:264px" width="22" height="18" viewBox="0 0 22 18"><path d="M5 5h12l-6 7z" fill="#c8c8c8"/></svg>
<div style="left:1747px;top:289px;width:1665px;height:1627.6px;background:#5d5d5d;"></div>
<svg style="left:0;top:0" width="3840" height="2114" viewBox="0 0 3840 2114" shape-rendering="crispEdges"><path d="M1782.5 289V1916.6M1817.5 289V1916.6M1852.5 289V1916.6M1887.5 289V1916.6M1922.5 289V1916.6M1957.5 289V1916.6M1992.5 289V1916.6M2027.5 289V1916.6M2062.5 289V1916.6M2097.5 289V1916.6M2132.5 289V1916.6M2167.5 289V1916.6M2202.5 289V1916.6M2238.5 289V1916.6M2273.5 289V1916.6M2308.5 289V1916.6M2343.5 289V1916.6M2378.5 289V1916.6M2413.5 289V1916.6M2448.5 289V1916.6M2483.5 289V1916.6M2518.5 289V1916.6M2553.5 289V1916.6M2588.5 289V1916.6M2623.5 289V1916.6M2658.5 289V1916.6M2694.5 289V1916.6M2729.5 289V1916.6M2764.5 289V1916.6M2799.5 289V1916.6M2834.5 289V1916.6M2869.5 289V1916.6M2904.5 289V1916.6M2939.5 289V1916.6M2974.5 289V1916.6M3009.5 289V1916.6M3044.5 289V1916.6M3079.5 289V1916.6M3114.5 289V1916.6M3150.5 289V1916.6M3185.5 289V1916.6M3220.5 289V1916.6M3255.5 289V1916.6M3290.5 289V1916.6M3325.5 289V1916.6M3360.5 289V1916.6M3395.5 289V1916.6M1747 294.5H3412M1747 329.5H3412M1747 364.5H3412M1747 399.5H3412M1747 434.5H3412M1747 469.5H3412M1747 504.5H3412M1747 540.5H3412M1747 575.5H3412M1747 610.5H3412M1747 645.5H3412M1747 680.5H3412M1747 715.5H3412M1747 750.5H3412M1747 785.5H3412M1747 820.5H3412M1747 856.5H3412M1747 891.5H3412M1747 926.5H3412M1747 961.5H3412M1747 996.5H3412M1747 1031.5H3412M1747 1066.5H3412M1747 1101.5H3412M1747 1136.5H3412M1747 1171.5H3412M1747 1207.5H3412M1747 1242.5H3412M1747 1277.5H3412M1747 1312.5H3412M1747 1347.5H3412M1747 1382.5H3412M1747 1417.5H3412M1747 1452.5H3412M1747 1487.5H3412M1747 1522.5H3412M1747 1558.5H3412M1747 1593.5H3412M1747 1628.5H3412M1747 1663.5H3412M1747 1698.5H3412M1747 1733.5H3412M1747 1768.5H3412M1747 1803.5H3412M1747 1838.5H3412M1747 1873.5H3412M1747 1909.5H3412" stroke="#464646" stroke-width="1" fill="none"/><path d="M2308.500 289V1916.6M1747 995.500H3412" stroke="#5cc8e8" stroke-width="1" fill="none"/></svg>
<div style="left:2307px;top:1818px;width:2.3px;height:98.6px;background:#5cd4f4;"></div>
<div style="left:2307px;top:1793px;width:1.200px;height:25px;background-image:linear-gradient(#5cd4f4 4px,transparent 4px);background-size:2px 6px;"></div>
<svg style="left:0;top:0;pointer-events:none" width="3840" height="2114" viewBox="0 0 3840 2114"><path d="M2309.81 1150.02L2138.55 933.81L2294.52 1161.29Z M2302.16 1155.65L2138.55 933.81M2303.31 1154.81L2138.55 933.81" stroke="#28084a" stroke-width="2.6" fill="none" stroke-linejoin="miter"/><path d="M2142.7 915.4L2132.5 865.7L2122.3 915.4Z M2132.5 915.4L2132.5 865.7M2134.03 915.4L2132.5 865.7" stroke="#28084a" stroke-width="2.4" fill="none" stroke-linejoin="miter"/><path d="M2142.7 845.3L2132.5 794.7L2122.3 845.3Z M2132.5 845.3L2132.5 794.7M2134.03 845.3L2132.5 794.7" stroke="#28084a" stroke-width="2.4" fill="none" stroke-linejoin="miter"/><circle cx="2132.5" cy="785.4" r="9.3" fill="none" stroke="#28084a" stroke-width="2.4"/><path d="M2123.2 785.4h18.6M2132.5 776.1v18.6" stroke="#28084a" stroke-width="2.4"/><circle cx="2132.5" cy="855.5" r="10.2" fill="none" stroke="#28084a" stroke-width="2.4"/><path d="M2122.3 855.5h20.4M2132.5 845.3v20.4" stroke="#28084a" stroke-width="2.4"/><circle cx="2132.5" cy="925.6" r="10.2" fill="none" stroke="#28084a" stroke-width="2.4"/><path d="M2122.3 925.6h20.4M2132.5 915.4v20.4" stroke="#28084a" stroke-width="2.4"/><path d="M2314.22 1151.5L2240.49 935.38L2296 1156.88Z M2305.11 1154.19L2240.49 935.38M2306.48 1153.79L2240.49 935.38" stroke="#28084a" stroke-width="2.6" fill="none" stroke-linejoin="miter"/><path d="M2247.8 915.4L2237.6 865.7L2227.4 915.4Z M2237.6 915.4L2237.6 865.7M2239.13 915.4L2237.6 865.7" stroke="#28084a" stroke-width="2.4" fill="none" stroke-linejoin="miter"/><path d="M2247.8 845.3L2237.6 794.7L2227.4 845.3Z M2237.6 845.3L2237.6 794.7M2239.13 845.3L2237.6 794.7" stroke="#28084a" stroke-width="2.4" fill="none" stroke-linejoin="miter"/><circle cx="2237.6" cy="785.4" r="9.3" fill="none" stroke="#28084a" stroke-width="2.4"/><path d="M2228.3 785.4h18.6M2237.6 776.1v18.6" stroke="#28084a" stroke-width="2.4"/><circle cx="2237.6" cy="855.5" r="10.2" fill="none" stroke="#28084a" stroke-width="2.4"/><path d="M2227.4 855.5h20.4M2237.6 845.3v20.4" stroke="#28084a" stroke-width="2.4"/><circle cx="2237.6" cy="925.6" r="10.2" fill="none" stroke="#28084a" stroke-width="2.4"/><path d="M2227.4 925.6h20.4M2237.6 915.4v20.4" stroke="#28084a" stroke-width="2.4"/><path d="M2318.6 1155.31L2341.79 935.69L2299.81 1152.5Z M2309.2 1153.9L2341.79 935.69M2310.61 1154.11L2341.79 935.69" stroke="#28084a" stroke-width="2.6" fill="none" stroke-linejoin="miter"/><path d="M2353.5 915.4L2343.3 865.7L2333.1 915.4Z M2343.3 915.4L2343.3 865.7M2344.83 915.4L2343.3 865.7" stroke="#28084a" stroke-width="2.4" fill="none" stroke-linejoin="miter"/><path d="M2353.5 845.3L2343.3 794.7L2333.1 845.3Z M2343.3 845.3L2343.3 794.7M2344.83 845.3L2343.3 794.7" stroke="#28084a" stroke-width="2.4" fill="none" stroke-linejoin="miter"/><circle cx="2343.3" cy="785.4" r="9.3" fill="none" stroke="#28084a" stroke-width="2.4"/><path d="M2334 785.4h18.6M2343.3 776.1v18.6" stroke="#28084a" stroke-width="2.4"/><circle cx="2343.3" cy="855.5" r="10.2" fill="none" stroke="#28084a" stroke-width="2.4"/><path d="M2333.1 855.5h20.4M2343.3 845.3v20.4" stroke="#28084a" stroke-width="2.4"/><circle cx="2343.3" cy="925.6" r="10.2" fill="none" stroke="#28084a" stroke-width="2.4"/><path d="M2333.1 925.6h20.4M2343.3 915.4v20.4" stroke="#28084a" stroke-width="2.4"/><path d="M2320.81 1159.96L2443.21 934.38L2304.46 1150.29Z M2312.64 1155.12L2443.21 934.38M2313.86 1155.85L2443.21 934.38" stroke="#28084a" stroke-width="2.6" fill="none" stroke-linejoin="miter"/><path d="M2458.6 915.4L2448.4 865.7L2438.2 915.4Z M2448.4 915.4L2448.4 865.7M2449.93 915.4L2448.4 865.7" stroke="#28084a" stroke-width="2.4" fill="none" stroke-linejoin="miter"/><path d="M2458.6 845.3L2448.4 794.7L2438.2 845.3Z M2448.4 845.3L2448.4 794.7M2449.93 845.3L2448.4 794.7" stroke="#28084a" stroke-width="2.4" fill="none" stroke-linejoin="miter"/><circle cx="2448.4" cy="785.4" r="9.3" fill="none" stroke="#28084a" stroke-width="2.4"/><path d="M2439.1 785.4h18.6M2448.4 776.1v18.6" stroke="#28084a" stroke-width="2.4"/><circle cx="2448.4" cy="855.5" r="10.2" fill="none" stroke="#28084a" stroke-width="2.4"/><path d="M2438.2 855.5h20.4M2448.4 845.3v20.4" stroke="#28084a" stroke-width="2.4"/><circle cx="2448.4" cy="925.6" r="10.2" fill="none" stroke="#28084a" stroke-width="2.4"/><path d="M2438.2 925.6h20.4M2448.4 915.4v20.4" stroke="#28084a" stroke-width="2.4"/><path d="M2298.31 1172.81L2307.98 1294.8L2317.31 1172.79Z M2307.81 1172.8L2307.98 1294.8M2306.39 1172.8L2307.98 1294.8" stroke="#28084a" stroke-width="2.4" fill="none" stroke-linejoin="miter"/><circle cx="2307.8" cy="1163.3" r="9" fill="none" stroke="#28084a" stroke-width="2.4"/><path d="M2298.8 1163.3h18M2307.8 1154.3v18" stroke="#28084a" stroke-width="2.4"/><circle cx="2308" cy="1308.3" r="8.8" fill="none" stroke="#28084a" stroke-width="2.4"/><path d="M2299.2 1308.3h17.6M2308 1299.5v17.6" stroke="#28084a" stroke-width="2.4"/><path d="M2774.8 1055.6L2764.4 1007.9L2754 1055.6Z M2764.4 1055.6L2764.4 1007.9M2765.96 1055.6L2764.4 1007.9" stroke="#28084a" stroke-width="2.4" fill="none" stroke-linejoin="miter"/><path d="M2776.4 983.9L2764.4 870.1L2752.4 983.9Z M2764.4 983.9L2764.4 870.1M2766.2 983.9L2764.4 870.1" stroke="#28084a" stroke-width="2.4" fill="none" stroke-linejoin="miter"/><circle cx="2764.4" cy="1066" r="10" fill="none" stroke="#28084a" stroke-width="2.4"/><path d="M2754.4 1066h20M2764.4 1056v20" stroke="#28084a" stroke-width="2.4"/><circle cx="2764.4" cy="995.9" r="11.8" fill="none" stroke="#28084a" stroke-width="2.4"/><path d="M2752.6 995.9h23.6M2764.4 984.1v23.6" stroke="#28084a" stroke-width="2.4"/><circle cx="2764.4" cy="855.6" r="12" fill="none" stroke="#3cf0a8" stroke-width="2.2"/><path d="M2752.4 855.6h24M2764.4 843.6v24" stroke="#3cf0a8" stroke-width="2.2"/><rect x="2749.2" y="840.300" width="30.500" height="30.500" fill="none" stroke="#58c8e8" stroke-width="1.200"/><path d="M2764.4 826V585" stroke="#22e422" stroke-width="1.500"/><path d="M2764.4 552.300l7.500 33.600h-15z" fill="#22ee22"/><path d="M2794 855.600H3034" stroke="#f4f470" stroke-width="1.500"/><path d="M3068.200 855.600l-34.300 8v-16z" fill="#f2f25a"/><rect x="2953.100" y="640" width="26.900" height="26.900" fill="#4448d8" stroke="#2828f8" stroke-width="1"/><path d="M1785.300 1877.800V1857.600" stroke="#22ee22" stroke-width="1.300"/><path d="M1785.300 1877.800H1806.700" stroke="#e81818" stroke-width="1.300"/></svg>
<span class="s" style="left:1781.5px;top:1837.14px;font-size:14px;line-height:18px;color:#22ee22;font-weight:700;">y</span>
<span class="s" style="left:1805.5px;top:1861.64px;font-size:14px;line-height:18px;color:#e81818;font-weight:700;">x</span>
<span class="s" style="left:1781px;top:1861.64px;font-size:14px;line-height:18px;color:#1818e8;font-weight:700;">z</span>
<span class="d" style="left:2335px;top:1293.14px;font-size:40px;line-height:52px;color:#00ff00;">root1</span>
<span class="d" style="left:2454.6px;top:1293.14px;font-size:40px;line-height:52px;color:#00ff00;transform:scaleX(1.0289);">not</span>
<span class="d" style="left:2531.8px;top:1293.14px;font-size:40px;line-height:52px;color:#00ff00;transform:scaleX(0.9512);">selected.</span>
<span class="d" style="left:2830.4px;top:1040.44px;font-size:40px;line-height:52px;color:#00ff00;transform:scaleX(0.9626);">root</span>
<span class="s" style="left:2535.9px;top:1885.35px;font-size:16px;line-height:21px;color:#fff;transform:scaleX(0.9128);font-weight:700;">front -Z</span>
<div class="c" style="left:1747px;top:289px;width:900px;height:200px;overflow:hidden">
<span class="s" style="left:23.3px;top:-2.93px;font-size:16.5px;line-height:21px;color:#fff;transform:scaleX(0.9049);font-weight:700;">Verts:</span>
<span class="s" style="left:184.5px;top:-2.93px;font-size:16.5px;line-height:21px;color:#fff;transform:scaleX(0.8936);font-weight:700;">0</span>
<span class="s" style="left:281.6px;top:-2.93px;font-size:16.5px;line-height:21px;color:#fff;transform:scaleX(0.8936);font-weight:700;">0</span>
<span class="s" style="left:378.7px;top:-2.93px;font-size:16.5px;line-height:21px;color:#fff;transform:scaleX(0.8936);font-weight:700;">0</span>
<span class="s" style="left:23.3px;top:27.07px;font-size:16.5px;line-height:21px;color:#fff;transform:scaleX(0.8961);font-weight:700;">Edges:</span>
<span class="s" style="left:184.5px;top:27.07px;font-size:16.5px;line-height:21px;color:#fff;transform:scaleX(0.8936);font-weight:700;">0</span>
<span class="s" style="left:281.6px;top:27.07px;font-size:16.5px;line-height:21px;color:#fff;transform:scaleX(0.8936);font-weight:700;">0</span>
<span class="s" style="left:378.7px;top:27.07px;font-size:16.5px;line-height:21px;color:#fff;transform:scaleX(0.8936);font-weight:700;">0</span>
<span class="s" style="left:23.3px;top:57.07px;font-size:16.5px;line-height:21px;color:#fff;transform:scaleX(0.8913);font-weight:700;">Faces:</span>
<span class="s" style="left:184.5px;top:57.07px;font-size:16.5px;line-height:21px;color:#fff;transform:scaleX(0.8936);font-weight:700;">0</span>
<span class="s" style="left:281.6px;top:57.07px;font-size:16.5px;line-height:21px;color:#fff;transform:scaleX(0.8936);font-weight:700;">0</span>
<span class="s" style="left:378.7px;top:57.07px;font-size:16.5px;line-height:21px;color:#fff;transform:scaleX(0.8936);font-weight:700;">0</span>
<span class="s" style="left:23.3px;top:87.07px;font-size:16.5px;line-height:21px;color:#fff;transform:scaleX(0.9126);font-weight:700;">Tris:</span>
<span class="s" style="left:184.5px;top:87.07px;font-size:16.5px;line-height:21px;color:#fff;transform:scaleX(0.8936);font-weight:700;">0</span>
<span class="s" style="left:281.6px;top:87.07px;font-size:16.5px;line-height:21px;color:#fff;transform:scaleX(0.8936);font-weight:700;">0</span>
<span class="s" style="left:378.7px;top:87.07px;font-size:16.5px;line-height:21px;color:#fff;transform:scaleX(0.8936);font-weight:700;">0</span>
<span class="s" style="left:23.3px;top:117.07px;font-size:16.5px;line-height:21px;color:#fff;transform:scaleX(0.8991);font-weight:700;">UVs:</span>
<span class="s" style="left:184.5px;top:117.07px;font-size:16.5px;line-height:21px;color:#fff;transform:scaleX(0.8936);font-weight:700;">0</span>
<span class="s" style="left:281.6px;top:117.07px;font-size:16.5px;line-height:21px;color:#fff;transform:scaleX(0.8936);font-weight:700;">0</span>
<span class="s" style="left:378.7px;top:117.07px;font-size:16.5px;line-height:21px;color:#fff;transform:scaleX(0.8936);font-weight:700;">0</span>
</div>
<div style="left:3416.5px;top:224px;width:3.2px;height:1696px;background:#383838;"></div>
<svg style="left:3715.6px;top:228.8px;" width="24" height="24" viewBox="0 0 32 32"><path d="M16 3l5 7h-3v8l8 5 2-3 2 9h-9l3-3-8-5-8 5 3 3H2l2-9 2 3 8-5v-8h-3z" fill="none"/><path d="M16 2l5 7h-10z" fill="#5fc45f"/><path d="M2 28l2-8 6 6z" fill="#4a7ae8"/><path d="M30 28l-2-8-6 6z" fill="#e84a4a"/><path d="M16 9v9M16 18l-9 6M16 18l9 6" stroke="#d0d0d0" stroke-width="2"/></svg>
<svg style="left:3747.8px;top:227.8px;" width="26" height="26" viewBox="0 0 32 32"><path d="M4 22a12 12 0 0 1 24 0h-6a6 6 0 0 0-12 0z" fill="#9a9a9a"/><path d="M6 26c0-6 3-9 9-9v-4l-9 6z" fill="#3eb4c4"/><path d="M6 22l2 8 6-6z" fill="#3eb4c4"/></svg>
<svg style="left:3780px;top:227.8px;" width="26" height="26" viewBox="0 0 32 32"><path d="M3 3v26h26" stroke="#8a8a8a" stroke-width="1.600" fill="none"/><path d="M8 24L24 8" stroke="#3eb4c4" stroke-width="3"/><path d="M17 5h10v10z" fill="#3eb4c4"/></svg>
<span class="s" style="left:3438px;top:263.85px;font-size:16px;line-height:21px;color:#cfcfcf;transform:scaleX(0.9511);">Channels</span>
<span class="s" style="left:3528.5px;top:263.85px;font-size:16px;line-height:21px;color:#cfcfcf;transform:scaleX(0.9466);">Edit</span>
<span class="s" style="left:3580px;top:263.85px;font-size:16px;line-height:21px;color:#cfcfcf;transform:scaleX(0.9904);">Object</span>
<span class="s" style="left:3651.5px;top:263.85px;font-size:16px;line-height:21px;color:#cfcfcf;transform:scaleX(0.9719);">Show</span>
<span class="s" style="left:3428.9px;top:297.05px;font-size:16px;line-height:21px;color:#e0e0e0;transform:scaleX(0.9619);font-weight:700;">joint10</span>
<span class="s" style="left:3609.87px;top:320.15px;font-size:16px;line-height:21px;color:#cfcfcf;transform:scaleX(0.9250);">Translate X</span>
<div style="left:3694.4px;top:317.8px;width:111.1px;height:22px;background:#2b2b2b;border-radius:2px;"></div>
<span class="s" style="left:3707.3px;top:320.15px;font-size:16px;line-height:21px;color:#e0e0e0;">4</span>
<span class="s" style="left:3610.14px;top:344.15px;font-size:16px;line-height:21px;color:#cfcfcf;transform:scaleX(0.9250);">Translate Y</span>
<div style="left:3694.4px;top:341.8px;width:111.1px;height:22px;background:#2b2b2b;border-radius:2px;"></div>
<span class="s" style="left:3707.3px;top:344.15px;font-size:16px;line-height:21px;color:#e0e0e0;">0</span>
<span class="s" style="left:3610.7px;top:368.15px;font-size:16px;line-height:21px;color:#cfcfcf;transform:scaleX(0.9250);">Translate Z</span>
<div style="left:3694.4px;top:365.8px;width:111.1px;height:22px;background:#2b2b2b;border-radius:2px;"></div>
<span class="s" style="left:3707.3px;top:368.15px;font-size:16px;line-height:21px;color:#e0e0e0;">0</span>
<span class="s" style="left:3627.41px;top:392.15px;font-size:16px;line-height:21px;color:#cfcfcf;transform:scaleX(0.9250);">Rotate X</span>
<div style="left:3694.4px;top:389.8px;width:111.1px;height:22px;background:#2b2b2b;border-radius:2px;"></div>
<span class="s" style="left:3707.3px;top:392.15px;font-size:16px;line-height:21px;color:#e0e0e0;">0</span>
<span class="s" style="left:3627.68px;top:416.15px;font-size:16px;line-height:21px;color:#cfcfcf;transform:scaleX(0.9250);">Rotate Y</span>
<div style="left:3694.4px;top:413.8px;width:111.1px;height:22px;background:#2b2b2b;border-radius:2px;"></div>
<span class="s" style="left:3707.3px;top:416.15px;font-size:16px;line-height:21px;color:#e0e0e0;">0</span>
<span class="s" style="left:3628.24px;top:440.15px;font-size:16px;line-height:21px;color:#cfcfcf;transform:scaleX(0.9250);">Rotate Z</span>
<div style="left:3694.4px;top:437.8px;width:111.1px;height:22px;background:#2b2b2b;border-radius:2px;"></div>
<span class="s" style="left:3707.3px;top:440.15px;font-size:16px;line-height:21px;color:#e0e0e0;">0</span>
<span class="s" style="left:3633.99px;top:464.15px;font-size:16px;line-height:21px;color:#cfcfcf;transform:scaleX(0.9250);">Scale X</span>
<div style="left:3694.4px;top:461.8px;width:111.1px;height:22px;background:#2b2b2b;border-radius:2px;"></div>
<span class="s" style="left:3707.3px;top:464.15px;font-size:16px;line-height:21px;color:#e0e0e0;">1</span>
<span class="s" style="left:3634.26px;top:488.15px;font-size:16px;line-height:21px;color:#cfcfcf;transform:scaleX(0.9250);">Scale Y</span>
<div style="left:3694.4px;top:485.8px;width:111.1px;height:22px;background:#2b2b2b;border-radius:2px;"></div>
<span class="s" style="left:3707.3px;top:488.15px;font-size:16px;line-height:21px;color:#e0e0e0;">1</span>
<span class="s" style="left:3634.82px;top:512.15px;font-size:16px;line-height:21px;color:#cfcfcf;transform:scaleX(0.9250);">Scale Z</span>
<div style="left:3694.4px;top:509.8px;width:111.1px;height:22px;background:#2b2b2b;border-radius:2px;"></div>
<span class="s" style="left:3707.3px;top:512.15px;font-size:16px;line-height:21px;color:#e0e0e0;">1</span>
<span class="s" style="left:3631.81px;top:536.15px;font-size:16px;line-height:21px;color:#cfcfcf;transform:scaleX(0.9250);">Visibility</span>
<div style="left:3694.4px;top:533.8px;width:111.1px;height:22px;background:#353535;border-radius:2px;"></div>
<span class="s" style="left:3707.3px;top:536.15px;font-size:16px;line-height:21px;color:#e0e0e0;">on</span>
<span class="s" style="left:3638.93px;top:560.15px;font-size:16px;line-height:21px;color:#cfcfcf;transform:scaleX(0.9250);">Radius</span>
<div style="left:3694.4px;top:557.8px;width:111.1px;height:22px;background:#2b2b2b;border-radius:2px;"></div>
<div style="left:3694.4px;top:557.8px;width:10.5px;height:22px;background:#8c8c8c;"></div>
<span class="s" style="left:3707.3px;top:560.15px;font-size:16px;line-height:21px;color:#e0e0e0;transform:scaleX(0.9491);">0.655</span>
<div style="left:3428px;top:605px;width:378.4px;height:441.2px;background:#2b2b2b;"></div>
<div style="left:3551px;top:1051.500px;width:130px;height:3px;background-image:radial-gradient(circle,#8a8a8a 0.900px,transparent 1.200px);background-size:5.700px 3px"></div>
<div style="left:3424px;top:1063.5px;width:386.5px;height:852.5px;background:#444;border:1px solid #3a3a3a;box-sizing:border-box;"></div>
<div style="left:3425px;top:1064.5px;width:384.5px;height:23.5px;background:#383838;"></div>
<div style="left:3426.4px;top:1063.5px;width:84.4px;height:25px;background:#444;border-radius:3px 3px 0 0;border:1px solid #3c3c3c;border-bottom:none;box-sizing:border-box;"></div>
<div style="left:3513.7px;top:1065px;width:70.6px;height:23px;background:#353535;border-radius:3px 3px 0 0;border:1px solid #484848;border-bottom:none;box-sizing:border-box;"></div>
<span class="s" style="left:3442px;top:1069.15px;font-size:16px;line-height:21px;color:#e4e4e4;">Display</span>
<span class="s" style="left:3530.5px;top:1069.15px;font-size:16px;line-height:21px;color:#8f8f8f;transform:scaleX(1.0287);">Anim</span>
<span class="s" style="left:3441.7px;top:1097.35px;font-size:16px;line-height:21px;color:#cfcfcf;transform:scaleX(0.9349);">Layers</span>
<span class="s" style="left:3512px;top:1097.35px;font-size:16px;line-height:21px;color:#cfcfcf;transform:scaleX(1.0065);">Options</span>
<span class="s" style="left:3593px;top:1097.35px;font-size:16px;line-height:21px;color:#cfcfcf;">Help</span>
<svg style="left:3662.6px;top:1126px;" width="26" height="26" viewBox="0 0 32 32"><path d="M2 18l10-7h10l-10 7z" fill="#d0d0d0" transform="translate(0,-1)"/><path d="M2 17l10 7 10-7" fill="#d0d0d0"/><path d="M24 28V16M19 20l5-6 5 6z" fill="#3eb4c4" stroke="#3eb4c4" stroke-width="2.500"/></svg>
<svg style="left:3698.7px;top:1126px;" width="26" height="26" viewBox="0 0 32 32"><path d="M2 18l10-7h10l-10 7z" fill="#d0d0d0" transform="translate(0,-1)"/><path d="M2 17l10 7 10-7" fill="#d0d0d0"/><path d="M24 12v12M19 20l5 6 5-6z" fill="#3eb4c4" stroke="#3eb4c4" stroke-width="2.500"/></svg>
<svg style="left:3737px;top:1126px;" width="26" height="26" viewBox="0 0 32 32"><path d="M2 18l10-7h10l-10 7z" fill="#d0d0d0" transform="translate(0,-1)"/><path d="M2 17l10 7 10-7" fill="#d0d0d0"/><path d="M26 4v10M21 9h10" stroke="#3eb4c4" stroke-width="2.500"/></svg>
<svg style="left:3773.7px;top:1126px;" width="26" height="26" viewBox="0 0 32 32"><path d="M2 18l10-7h10l-10 7z" fill="#d0d0d0" transform="translate(0,-1)"/><path d="M2 17l10 7 10-7" fill="#d0d0d0"/><circle cx="26" cy="8" r="5" fill="#3eb4c4"/></svg>
<div style="left:3427.9px;top:1160px;width:378.1px;height:734.5px;background:#2b2b2b;"></div>
<div style="left:3427.9px;top:1894.5px;width:378.1px;height:18px;background:#343434;"></div>
<svg style="left:3431px;top:1894.500px" width="12" height="18" viewBox="0 0 12 18"><path d="M9 3v12l-7-6z" fill="#bbb"/></svg>
<svg style="left:3790px;top:1894.500px" width="12" height="18" viewBox="0 0 12 18"><path d="M3 3v12l7-6z" fill="#bbb"/></svg>
<div style="left:3446.8px;top:1895.5px;width:242.2px;height:16px;background:#5d5d5d;border-radius:8px;"></div>
<div style="left:3812px;top:224px;width:28px;height:1696px;background:#3a3a3a;"></div>
<div style="left:3812px;top:228px;width:28px;height:217px;background:#444;"></div>
<div style="left:3813px;top:448px;width:27px;height:142px;background:#373737;border:1px solid #4a4a4a;border-right:none;box-sizing:border-box;border-radius:3px 0 0 3px;"></div>
<div style="left:3813px;top:593px;width:27px;height:148px;background:#373737;border:1px solid #4a4a4a;border-right:none;box-sizing:border-box;border-radius:3px 0 0 3px;"></div>
<span class="s" style="left:3824.300px;top:335px;font-size:16px;line-height:20px;color:#d8d8d8;transform-origin:0 0;transform:rotate(90deg) translate(-93px,-10px) scaleX(0.9727);">Channel Box / Layer Editor</span>
<span class="s" style="left:3824.300px;top:518.2px;font-size:16px;line-height:20px;color:#8f8f8f;transform-origin:0 0;transform:rotate(90deg) translate(-53.55px,-10px) scaleX(1.0120);">Attribute Editor</span>
<span class="s" style="left:3824.300px;top:667.8px;font-size:16px;line-height:20px;color:#8f8f8f;transform-origin:0 0;transform:rotate(90deg) translate(-58.45px,-10px) scaleX(1.0215);">Modeling Toolkit</span>
<div style="left:0px;top:1919.7px;width:3840px;height:6px;background:#3a3a3a;"></div>
<div style="left:4px;top:1927px;width:7px;height:77px;background-image:linear-gradient(90deg,#8e8e8e 2px,transparent 2px);background-size:5px 100%;-webkit-mask-image:linear-gradient(#000 2px,transparent 2px);-webkit-mask-size:100% 5px;mask-image:linear-gradient(#000 2px,transparent 2px);mask-size:100% 5px;"></div>
<div style="left:4px;top:2012px;width:7px;height:47px;background-image:linear-gradient(90deg,#8e8e8e 2px,transparent 2px);background-size:5px 100%;-webkit-mask-image:linear-gradient(#000 2px,transparent 2px);-webkit-mask-size:100% 5px;mask-image:linear-gradient(#000 2px,transparent 2px);mask-size:100% 5px;"></div>
<div style="left:4px;top:2067px;width:7px;height:47px;background-image:linear-gradient(90deg,#8e8e8e 2px,transparent 2px);background-size:5px 100%;-webkit-mask-image:linear-gradient(#000 2px,transparent 2px);-webkit-mask-size:100% 5px;mask-image:linear-gradient(#000 2px,transparent 2px);mask-size:100% 5px;"></div>
<div style="left:19.4px;top:1930.6px;width:3375.6px;height:69.9px;background:#2b2b2b;"></div>
<div style="left:36.9px;top:1930.6px;width:14px;height:69.9px;background:#4f4f4f;"></div>
<div style="left:50.9px;top:1996.6px;width:3326.7px;height:3.9px;background:#343434;"></div>
<span class="s" style="left:40px;top:1973.35px;font-size:16px;line-height:21px;color:#e8e8e8;">1</span>
<div style="left:218px;top:1952px;width:2.6px;height:42.3px;background:#8c8c8c;"></div>
<span class="s" style="left:222.6px;top:1930.65px;font-size:16px;line-height:21px;color:#8a8a8a;transform:scaleX(0.9500);">12</span>
<div style="left:418.54px;top:1952px;width:2.6px;height:42.3px;background:#8c8c8c;"></div>
<span class="s" style="left:423.14px;top:1930.65px;font-size:16px;line-height:21px;color:#8a8a8a;transform:scaleX(0.9500);">24</span>
<div style="left:619.09px;top:1952px;width:2.6px;height:42.3px;background:#8c8c8c;"></div>
<span class="s" style="left:623.69px;top:1930.65px;font-size:16px;line-height:21px;color:#8a8a8a;transform:scaleX(0.9500);">36</span>
<div style="left:819.63px;top:1952px;width:2.6px;height:42.3px;background:#8c8c8c;"></div>
<span class="s" style="left:824.23px;top:1930.65px;font-size:16px;line-height:21px;color:#8a8a8a;transform:scaleX(0.9500);">48</span>
<div style="left:1020.18px;top:1952px;width:2.6px;height:42.3px;background:#8c8c8c;"></div>
<span class="s" style="left:1024.78px;top:1930.65px;font-size:16px;line-height:21px;color:#8a8a8a;transform:scaleX(0.9500);">60</span>
<div style="left:1220.72px;top:1952px;width:2.6px;height:42.3px;background:#8c8c8c;"></div>
<span class="s" style="left:1225.32px;top:1930.65px;font-size:16px;line-height:21px;color:#8a8a8a;transform:scaleX(0.9500);">72</span>
<div style="left:1421.26px;top:1952px;width:2.6px;height:42.3px;background:#8c8c8c;"></div>
<span class="s" style="left:1425.86px;top:1930.65px;font-size:16px;line-height:21px;color:#8a8a8a;transform:scaleX(0.9500);">84</span>
<div style="left:1621.81px;top:1952px;width:2.6px;height:42.3px;background:#8c8c8c;"></div>
<span class="s" style="left:1626.41px;top:1930.65px;font-size:16px;line-height:21px;color:#8a8a8a;transform:scaleX(0.9500);">96</span>
<div style="left:1822.35px;top:1952px;width:2.6px;height:42.3px;background:#8c8c8c;"></div>
<span class="s" style="left:1826.95px;top:1930.65px;font-size:16px;line-height:21px;color:#8a8a8a;transform:scaleX(0.9500);">108</span>
<div style="left:2022.9px;top:1952px;width:2.6px;height:42.3px;background:#8c8c8c;"></div>
<span class="s" style="left:2027.5px;top:1930.65px;font-size:16px;line-height:21px;color:#8a8a8a;transform:scaleX(0.9500);">120</span>
<div style="left:2223.44px;top:1952px;width:2.6px;height:42.3px;background:#8c8c8c;"></div>
<span class="s" style="left:2228.04px;top:1930.65px;font-size:16px;line-height:21px;color:#8a8a8a;transform:scaleX(0.9500);">132</span>
<div style="left:2423.98px;top:1952px;width:2.6px;height:42.3px;background:#8c8c8c;"></div>
<span class="s" style="left:2428.58px;top:1930.65px;font-size:16px;line-height:21px;color:#8a8a8a;transform:scaleX(0.9500);">144</span>
<div style="left:2624.53px;top:1952px;width:2.6px;height:42.3px;background:#8c8c8c;"></div>
<span class="s" style="left:2629.13px;top:1930.65px;font-size:16px;line-height:21px;color:#8a8a8a;transform:scaleX(0.9500);">156</span>
<div style="left:2825.07px;top:1952px;width:2.6px;height:42.3px;background:#8c8c8c;"></div>
<span class="s" style="left:2829.67px;top:1930.65px;font-size:16px;line-height:21px;color:#8a8a8a;transform:scaleX(0.9500);">168</span>
<div style="left:3025.62px;top:1952px;width:2.6px;height:42.3px;background:#8c8c8c;"></div>
<span class="s" style="left:3030.22px;top:1930.65px;font-size:16px;line-height:21px;color:#8a8a8a;transform:scaleX(0.9500);">180</span>
<div style="left:3226.16px;top:1952px;width:2.6px;height:42.3px;background:#8c8c8c;"></div>
<span class="s" style="left:3230.76px;top:1930.65px;font-size:16px;line-height:21px;color:#8a8a8a;transform:scaleX(0.9500);">192</span>
<div style="left:3406px;top:1939px;width:134px;height:30px;background:#2b2b2b;border-radius:3px;"></div>
<span class="s" style="left:3418px;top:1945.85px;font-size:16px;line-height:21px;color:#e0e0e0;">1</span>
<svg style="left:3552.9px;top:1938.5px;" width="30" height="30" viewBox="0 0 32 32"><rect x="1" y="5" width="2.500" height="22" fill="#d0d0d0"/><path d="M17 6v20L5 16zM30 6v20L18 16z" fill="#d0d0d0"/></svg>
<svg style="left:3589px;top:1938.5px;" width="30" height="30" viewBox="0 0 32 32"><rect x="4" y="5" width="2.500" height="22" fill="#d0d0d0"/><path d="M26 5v22L8 16z" fill="#d0d0d0"/></svg>
<svg style="left:3623.5px;top:1938.5px;" width="30" height="30" viewBox="0 0 32 32"><rect x="5" y="4" width="5" height="24" fill="#e8803c"/><path d="M7.500 1v30" stroke="#e8803c" stroke-width="1"/><path d="M28 5v22L11 16z" fill="#d0d0d0"/></svg>
<svg style="left:3657px;top:1938.5px;" width="30" height="30" viewBox="0 0 32 32"><path d="M25 4v24L5 16z" fill="#d0d0d0"/></svg>
<svg style="left:3693px;top:1938.5px;" width="30" height="30" viewBox="0 0 32 32"><path d="M7 3v26l21-13z" fill="#d8d8d8"/></svg>
<svg style="left:3727.6px;top:1938.5px;" width="30" height="30" viewBox="0 0 32 32"><rect x="22" y="4" width="5" height="24" fill="#e8803c"/><path d="M24.500 1v30" stroke="#e8803c" stroke-width="1"/><path d="M4 5v22l17-11z" fill="#d0d0d0"/></svg>
<svg style="left:3762px;top:1938.5px;" width="30" height="30" viewBox="0 0 32 32"><rect x="25.500" y="5" width="2.500" height="22" fill="#d0d0d0"/><path d="M6 5v22l18-11z" fill="#d0d0d0"/></svg>
<svg style="left:3797.8px;top:1938.5px;" width="30" height="30" viewBox="0 0 32 32"><rect x="28.500" y="5" width="2.500" height="22" fill="#d0d0d0"/><path d="M2 6v20l12-10zM15 6v20l12-10z" fill="#d0d0d0"/></svg>
<div style="left:0px;top:2006.5px;width:3840px;height:4.5px;background:#3a3a3a;"></div>
<div style="left:20.2px;top:2018px;width:133.5px;height:37px;background:#2b2b2b;border-radius:3px;"></div>
<span class="s" style="left:30.5px;top:2027.65px;font-size:16px;line-height:21px;color:#e0e0e0;">1</span>
<div style="left:166px;top:2018px;width:133.7px;height:37px;background:#2b2b2b;border-radius:3px;"></div>
<span class="s" style="left:176.5px;top:2027.65px;font-size:16px;line-height:21px;color:#e0e0e0;">1</span>
<div style="left:310.6px;top:2018px;width:2336.7px;height:36.4px;background:#3a3a3a;border-radius:2px;"></div>
<div style="left:323px;top:2022.2px;width:2312px;height:27.6px;background:#5d5d5d;border-radius:3px;"></div>
<div style="left:329.2px;top:2025.3px;width:20.6px;height:19.1px;background:#8c8c8c;border-radius:3px;"></div>
<span class="s" style="left:358.5px;top:2027.65px;font-size:16px;line-height:21px;color:#e0e0e0;">1</span>
<span class="s" style="left:2572.7px;top:2027.65px;font-size:16px;line-height:21px;color:#e0e0e0;transform:scaleX(0.9777);">200</span>
<div style="left:2606.5px;top:2025.3px;width:20.2px;height:19.1px;background:#8c8c8c;border-radius:3px;"></div>
<div style="left:2659.3px;top:2018px;width:133.6px;height:37px;background:#2b2b2b;border-radius:3px;"></div>
<span class="s" style="left:2668.3px;top:2027.65px;font-size:16px;line-height:21px;color:#e0e0e0;transform:scaleX(0.9926);">200</span>
<div style="left:2805.3px;top:2018px;width:133.7px;height:37px;background:#2b2b2b;border-radius:3px;"></div>
<span class="s" style="left:2814.2px;top:2027.65px;font-size:16px;line-height:21px;color:#e0e0e0;transform:scaleX(0.9926);">200</span>
<div style="left:2946.3px;top:2021px;width:1px;height:31px;background:#8a8a8a;"></div>
<div style="left:2944.8px;top:2029px;width:4px;height:15px;background:#8a8a8a;"></div>
<div style="left:3013.8px;top:2021px;width:1px;height:31px;background:#8a8a8a;"></div>
<div style="left:3012.3px;top:2029px;width:4px;height:15px;background:#8a8a8a;"></div>
<div style="left:3430.5px;top:2021px;width:1px;height:31px;background:#8a8a8a;"></div>
<div style="left:3429px;top:2029px;width:4px;height:15px;background:#8a8a8a;"></div>
<div style="left:3685.5px;top:2021px;width:1px;height:31px;background:#8a8a8a;"></div>
<div style="left:3684px;top:2029px;width:4px;height:15px;background:#8a8a8a;"></div>
<svg style="left:2966px;top:2019px;" width="34" height="34" viewBox="0 0 32 32"><path d="M7 4h12v24l-6-7-6 7z" fill="#e07444"/><path d="M21 2v11M15.500 7.500h11" stroke="#e4e4e4" stroke-width="2"/></svg>
<svg style="left:3038px;top:2029px" width="16" height="12" viewBox="0 0 16 12"><path d="M2 2h12l-6 8z" fill="#666" stroke="#8a8a8a" stroke-width="1"/></svg>
<svg style="left:3235px;top:2029px" width="16" height="12" viewBox="0 0 16 12"><path d="M2 2h12l-6 8z" fill="#666" stroke="#8a8a8a" stroke-width="1"/></svg>
<div style="left:3064.4px;top:2019px;width:152.9px;height:35px;background:#444;border-radius:3px;border:1px solid #383838;box-sizing:border-box;"></div>
<span class="s" style="left:3074.5px;top:2027.65px;font-size:16px;line-height:21px;color:#d0d0d0;transform:scaleX(0.9748);">No Character Set</span>
<div style="left:3261.6px;top:2019px;width:152.9px;height:35px;background:#444;border-radius:3px;border:1px solid #383838;box-sizing:border-box;"></div>
<span class="s" style="left:3271.7px;top:2027.65px;font-size:16px;line-height:21px;color:#d0d0d0;transform:scaleX(1.0101);">No Anim Layer</span>
<div style="left:3451px;top:2023px;width:123.9px;height:25.6px;background:#5d5d5d;border-radius:2px;"></div>
<div style="left:3544px;top:2023px;width:1px;height:25.6px;background:#4a4a4a;"></div>
<span class="s" style="left:3456.4px;top:2027.65px;font-size:16px;line-height:21px;color:#d8d8d8;transform:scaleX(0.9751);">24 fps</span>
<svg style="left:3550px;top:2027px" width="22" height="18" viewBox="0 0 22 18"><path d="M5 5h12l-6 7z" fill="#d0d0d0"/></svg>
<svg style="left:3591.7px;top:2021px;" width="30" height="30" viewBox="0 0 32 32"><path d="M6 18v-2a6 6 0 0 1 6-6h10V6l6 6-6 6v-4H12a2 2 0 0 0-2 2v2zM26 14v2a6 6 0 0 1-6 6H10v4l-6-6 6-6v4h10a2 2 0 0 0 2-2v-2z" fill="#d0d0d0"/></svg>
<div style="left:3635px;top:2019px;width:35px;height:34.7px;background:#5285a6;border-radius:2px;"></div>
<svg style="left:3637.5px;top:2021px;" width="30" height="30" viewBox="0 0 32 32"><path d="M3 10h20v16H3z" fill="#e8e8e8"/><path d="M6 13h4v10H6zM12 13h4v10h-4zM18 13h4v10h-4z" fill="#5285a6"/><path d="M18 2l10 6-10 6z" fill="#e8e8e8"/><path d="M3 28h20" stroke="#e8803c" stroke-width="2"/></svg>
<svg style="left:3703.7px;top:2020px;" width="32" height="32" viewBox="0 0 32 32"><path d="M3 12h6l8-7v22l-8-7H3z" fill="#d0d0d0"/><path d="M20 11a7 7 0 0 1 0 10M23 7a12 12 0 0 1 0 18M26 4a16 16 0 0 1 0 24" stroke="#d0d0d0" stroke-width="1.800" fill="none"/></svg>
<div style="left:3748px;top:2019px;width:34px;height:34px;background:#d8263c;border-radius:2px;"></div>
<svg style="left:3750px;top:2021px;" width="30" height="30" viewBox="0 0 32 32"><circle cx="16" cy="16" r="10" fill="none" stroke="#f4d0d0" stroke-width="2.200" stroke-dasharray="22 8"/><rect x="14" y="8" width="4" height="16" fill="#f08a3c"/><path d="M9 16h14" stroke="#f4d0d0" stroke-width="2"/></svg>
<svg style="left:3792.6px;top:2020px;" width="32" height="32" viewBox="0 0 32 32"><circle cx="8" cy="8" r="4" fill="none" stroke="#d0d0d0" stroke-width="3" stroke-dasharray="2.200 1.500"/><circle cx="23" cy="9" r="3" fill="#e8803c"/><path d="M22 13l-6 3-3 5M22 13l-2 8 5 3 1 6M20 21l-5 4-4 0M22 14l5 3 4-2" stroke="#e8803c" stroke-width="2.600" fill="none" stroke-linecap="round"/></svg>
<div style="left:0px;top:2062px;width:3840px;height:4px;background:#3a3a3a;"></div>
<svg style="left:22px;top:2078px" width="24" height="24" viewBox="0 0 24 24"><circle cx="12" cy="12" r="11.500" fill="#8ab83c"/><text x="12" y="18" font-size="17" font-weight="700" text-anchor="middle" fill="#f4f4e8" font-family="Liberation Sans,sans-serif">?</text></svg>
<div class="c" style="left:56px;top:2070px;width:1572.500px;height:44px;overflow:hidden">
<span class="s" style="left:2.2px;top:10.35px;font-size:16px;line-height:21px;color:#e0e0e0;transform:scaleX(0.9504);">Move Tool: Use manipulator to move object(s). Ctrl+middle-drag to move components along normals. Shift+drag manipulator axis or plane handles to extrude components or clone objects. Ctrl+Shift+drag to constrain movement to a cc</span>
</div>
<div style="left:1630.8px;top:2066px;width:4px;height:48px;background:#3a3a3a;"></div>
<div style="left:1637.5px;top:2067px;width:7px;height:47px;background-image:linear-gradient(90deg,#8e8e8e 2px,transparent 2px);background-size:5px 100%;-webkit-mask-image:linear-gradient(#000 2px,transparent 2px);-webkit-mask-size:100% 5px;mask-image:linear-gradient(#000 2px,transparent 2px);mask-size:100% 5px;"></div>
<span class="s" style="left:1670.8px;top:2080.35px;font-size:16px;line-height:21px;color:#d8d8d8;transform:scaleX(0.9179);">MEL</span>
<div style="left:1722.8px;top:2073px;width:1027.2px;height:33px;background:#2b2b2b;border-radius:3px;"></div>
<div style="left:2762.6px;top:2073px;width:1028.4px;height:33px;background:#2b2b2b;border-radius:3px;"></div>
<svg style="left:2754px;top:2082px" width="6" height="12" viewBox="0 0 6 12"><circle cx="3" cy="2" r="1" fill="#8a8a8a"/><circle cx="3" cy="8" r="1" fill="#8a8a8a"/></svg>
<span class="s" style="left:2770px;top:2080.85px;font-size:16px;line-height:21px;color:#e0e0e0;transform:scaleX(0.9896);">ets-by-id/19dM_Zw7LEUfAjB9jZNYvWXCF376H0nH7/maya/mayaMdl/Playstation_2_System_Menu/autosave/__AUTO-SAVE__untitled.0199.mb</span>
<svg style="left:3800px;top:2076px" width="28" height="28" viewBox="0 0 28 28"><rect x="1" y="1" width="26" height="26" rx="1" fill="#c4c4c4"/><rect x="1" y="1" width="26" height="4" fill="#444"/><path d="M3 3h6" stroke="#c4c4c4" stroke-width="1" stroke-dasharray="1 1"/><text x="14" y="22" font-size="15" font-weight="700" text-anchor="middle" fill="#333" font-family="Liberation Sans,sans-serif">{;}</text></svg>
</div></body></html>
